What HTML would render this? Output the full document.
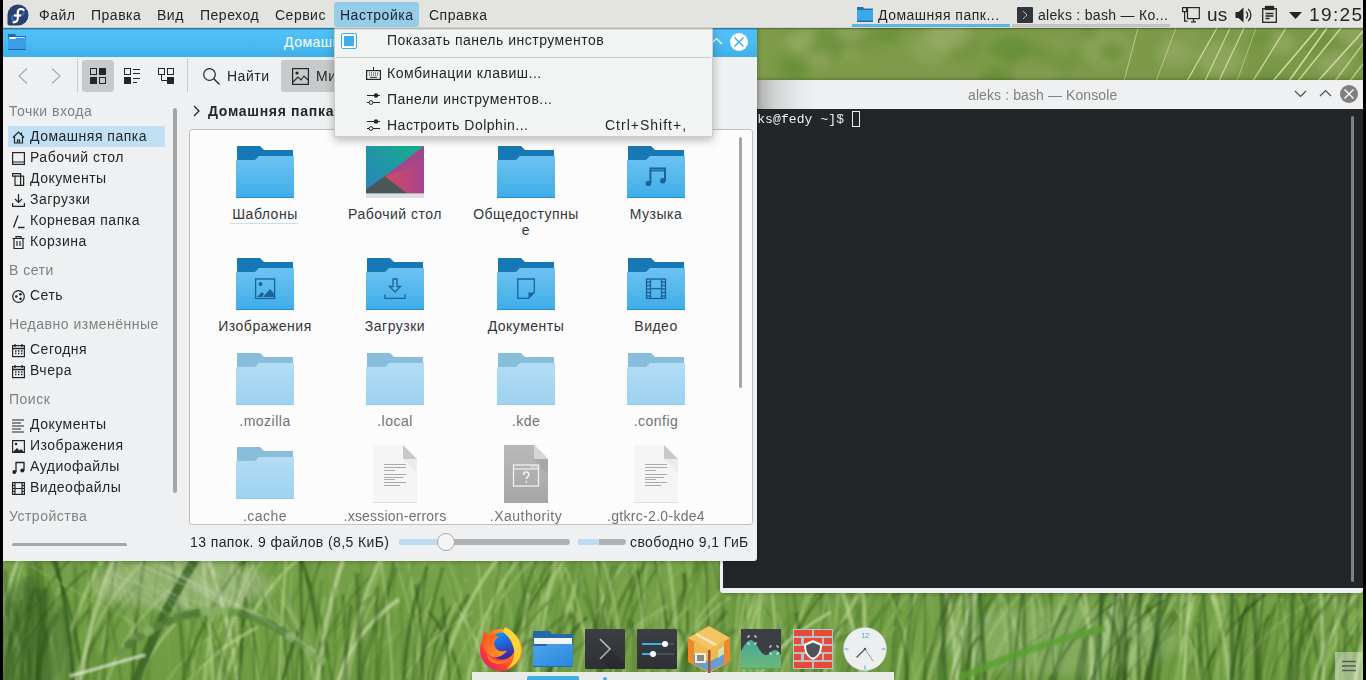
<!DOCTYPE html>
<html><head><meta charset="utf-8"><style>
*{box-sizing:border-box;margin:0;padding:0}
html,body{width:1366px;height:680px;overflow:hidden;background:#000}
body{position:relative;font-family:"Liberation Sans",sans-serif;font-size:14px;color:#232627;letter-spacing:0.5px}
.a{position:absolute}
.t{position:absolute;white-space:nowrap;line-height:16px}
svg.a{overflow:visible}
#wall{left:3px;top:0;width:1360px;height:680px;overflow:hidden;
 background:linear-gradient(180deg,#7d9c4c 0%,#75983f 15%,#6e9a45 60%,#79a552 85%,#6a9a3f 100%)}
#panel{left:3px;top:0;width:1360px;height:28px;background:#e3e4e0;border-bottom:1px solid #d0d2cc;box-shadow:0 1px 1.5px rgba(0,0,0,0.35);z-index:5}
.mi{top:7px}
.gh{color:#7f8081}
.lbl{position:absolute;white-space:nowrap;line-height:16px;text-align:center;width:130px;color:#31363b}
.hid{color:#6f7273}
</style></head><body>
<svg class="a" style="left:3px;top:0;overflow:hidden" width="1360" height="680" viewBox="3 0 1360 680"><defs><linearGradient id="wtop" x1="0" y1="0" x2="1" y2="0"><stop offset="0" stop-color="#74963f"/><stop offset="0.5" stop-color="#7e9c4a"/><stop offset="1" stop-color="#7a9848"/></linearGradient><linearGradient id="wbot" x1="0" y1="0" x2="0" y2="1"><stop offset="0" stop-color="#8aae60"/><stop offset="0.5" stop-color="#7ca64e"/><stop offset="1" stop-color="#709c44"/></linearGradient><filter id="blur4"><feGaussianBlur stdDeviation="4"/></filter><filter id="blur1"><feGaussianBlur stdDeviation="0.7"/></filter><filter id="blur2"><feGaussianBlur stdDeviation="1.2"/></filter></defs><rect x="3" y="0" width="1360" height="200" fill="url(#wtop)"/><rect x="3" y="200" width="1360" height="480" fill="url(#wbot)"/><g filter="url(#blur4)"><ellipse cx="953" cy="36" rx="19" ry="14" fill="#94a865" opacity="0.55"/><ellipse cx="1255" cy="33" rx="18" ry="13" fill="#88a058" opacity="0.55"/><ellipse cx="887" cy="33" rx="15" ry="11" fill="#5f8a30" opacity="0.55"/><ellipse cx="812" cy="51" rx="22" ry="16" fill="#94a865" opacity="0.55"/><ellipse cx="1331" cy="62" rx="18" ry="13" fill="#94a865" opacity="0.55"/><ellipse cx="1107" cy="49" rx="25" ry="18" fill="#94a865" opacity="0.55"/><ellipse cx="1094" cy="35" rx="15" ry="11" fill="#88a058" opacity="0.55"/><ellipse cx="828" cy="45" rx="22" ry="16" fill="#5f8a30" opacity="0.55"/><ellipse cx="819" cy="59" rx="12" ry="8" fill="#94a865" opacity="0.55"/><ellipse cx="1089" cy="31" rx="9" ry="7" fill="#5f8a30" opacity="0.55"/><ellipse cx="1058" cy="57" rx="21" ry="15" fill="#6a9038" opacity="0.55"/><ellipse cx="1112" cy="52" rx="13" ry="10" fill="#5f8a30" opacity="0.55"/><ellipse cx="1181" cy="41" rx="18" ry="13" fill="#88a058" opacity="0.55"/><ellipse cx="1057" cy="47" rx="16" ry="11" fill="#88a058" opacity="0.55"/><ellipse cx="1351" cy="34" rx="15" ry="11" fill="#9aae6a" opacity="0.55"/><ellipse cx="849" cy="54" rx="9" ry="6" fill="#94a865" opacity="0.55"/><ellipse cx="1220" cy="59" rx="23" ry="17" fill="#9aae6a" opacity="0.55"/><ellipse cx="963" cy="47" rx="17" ry="12" fill="#6a9038" opacity="0.55"/><ellipse cx="799" cy="33" rx="13" ry="9" fill="#94a865" opacity="0.55"/><ellipse cx="794" cy="66" rx="19" ry="14" fill="#6a9038" opacity="0.55"/><ellipse cx="929" cy="49" rx="20" ry="14" fill="#94a865" opacity="0.55"/><ellipse cx="1327" cy="47" rx="19" ry="13" fill="#6a9038" opacity="0.55"/><ellipse cx="793" cy="69" rx="11" ry="8" fill="#5f8a30" opacity="0.55"/><ellipse cx="998" cy="78" rx="17" ry="12" fill="#5f8a30" opacity="0.55"/><ellipse cx="1029" cy="58" rx="23" ry="17" fill="#6a9038" opacity="0.55"/><ellipse cx="1281" cy="43" rx="15" ry="11" fill="#9aae6a" opacity="0.55"/><ellipse cx="1171" cy="49" rx="12" ry="9" fill="#94a865" opacity="0.55"/><ellipse cx="864" cy="41" rx="12" ry="9" fill="#6a9038" opacity="0.55"/><ellipse cx="1261" cy="38" rx="13" ry="9" fill="#5f8a30" opacity="0.55"/><ellipse cx="1011" cy="48" rx="18" ry="13" fill="#5f8a30" opacity="0.55"/><ellipse cx="1175" cy="56" rx="19" ry="13" fill="#94a865" opacity="0.55"/><ellipse cx="1034" cy="75" rx="24" ry="17" fill="#88a058" opacity="0.55"/><ellipse cx="995" cy="50" rx="10" ry="7" fill="#6a9038" opacity="0.55"/><ellipse cx="795" cy="32" rx="12" ry="9" fill="#5f8a30" opacity="0.55"/><ellipse cx="824" cy="60" rx="10" ry="7" fill="#88a058" opacity="0.55"/><ellipse cx="849" cy="33" rx="15" ry="10" fill="#94a865" opacity="0.55"/><ellipse cx="800" cy="39" rx="15" ry="11" fill="#9aae6a" opacity="0.55"/><ellipse cx="1336" cy="61" rx="16" ry="12" fill="#94a865" opacity="0.55"/><ellipse cx="1271" cy="82" rx="16" ry="12" fill="#6a9038" opacity="0.55"/><ellipse cx="946" cy="36" rx="21" ry="15" fill="#9aae6a" opacity="0.55"/></g><g stroke="#dde8b0" fill="none" filter="url(#blur1)"><path d="M1124 81 L1138 28" stroke-width="1" opacity="0.6"/><path d="M1156 81 L1176 28" stroke-width="1" opacity="0.55"/><path d="M1187 81 L1217 28" stroke-width="1.3" opacity="0.8"/><path d="M1205 81 L1230 28" stroke-width="1.2" opacity="0.75"/><path d="M1219 81 L1244 28" stroke-width="1.2" opacity="0.8"/><path d="M1237 81 L1256 28" stroke-width="1" opacity="0.5"/><path d="M1253 81 L1286 28" stroke-width="1.3" opacity="0.8"/><path d="M1273 81 L1318 28" stroke-width="1.6" opacity="0.85"/><path d="M1289 81 L1327 28" stroke-width="1.6" opacity="0.85"/><path d="M1298 81 L1341 28" stroke-width="1.5" opacity="0.8"/><path d="M1318 81 L1366 28" stroke-width="1.6" opacity="0.8"/><path d="M1335 81 L1375 28" stroke-width="1.4" opacity="0.7"/><path d="M1350 81 L1390 28" stroke-width="1.4" opacity="0.7"/></g><g filter="url(#blur2)"><path d="M650 711 Q647 626 637 569" stroke="#2c5016" stroke-width="2.0" fill="none" opacity="0.61"/><path d="M1260 713 Q1269 643 1303 597" stroke="#4a7826" stroke-width="3.0" fill="none" opacity="0.42"/><path d="M493 695 Q499 591 523 522" stroke="#2c5016" stroke-width="1.9" fill="none" opacity="0.40"/><path d="M1116 720 Q1129 610 1181 537" stroke="#cde0a8" stroke-width="3.2" fill="none" opacity="0.40"/><path d="M705 701 Q697 651 668 617" stroke="#8cb85a" stroke-width="2.3" fill="none" opacity="0.39"/><path d="M827 700 Q838 594 881 523" stroke="#6a9a3c" stroke-width="3.9" fill="none" opacity="0.46"/><path d="M289 697 Q286 635 275 593" stroke="#35601c" stroke-width="2.3" fill="none" opacity="0.59"/><path d="M1100 693 Q1115 597 1178 533" stroke="#b8d48c" stroke-width="2.3" fill="none" opacity="0.38"/><path d="M1085 700 Q1102 594 1171 524" stroke="#cde0a8" stroke-width="2.3" fill="none" opacity="0.63"/><path d="M99 695 Q92 575 62 496" stroke="#5a8a32" stroke-width="3.4" fill="none" opacity="0.37"/><path d="M1137 719 Q1138 624 1143 561" stroke="#2c5016" stroke-width="2.6" fill="none" opacity="0.31"/><path d="M1099 712 Q1111 656 1157 619" stroke="#a8c878" stroke-width="2.2" fill="none" opacity="0.69"/><path d="M1137 696 Q1136 630 1135 586" stroke="#b8d48c" stroke-width="3.2" fill="none" opacity="0.45"/><path d="M742 715 Q753 663 798 628" stroke="#5a8a32" stroke-width="2.9" fill="none" opacity="0.67"/><path d="M703 715 Q699 604 680 529" stroke="#a8c878" stroke-width="2.5" fill="none" opacity="0.31"/><path d="M596 695 Q609 647 660 615" stroke="#a8c878" stroke-width="1.3" fill="none" opacity="0.58"/><path d="M148 692 Q154 595 177 530" stroke="#5a8a32" stroke-width="3.3" fill="none" opacity="0.35"/><path d="M764 697 Q776 630 825 584" stroke="#2c5016" stroke-width="2.2" fill="none" opacity="0.31"/><path d="M1232 692 Q1249 620 1318 573" stroke="#2c5016" stroke-width="1.4" fill="none" opacity="0.42"/><path d="M691 714 Q690 630 684 573" stroke="#2c5016" stroke-width="3.6" fill="none" opacity="0.72"/><path d="M343 707 Q357 591 413 514" stroke="#a8c878" stroke-width="2.1" fill="none" opacity="0.48"/><path d="M422 710 Q420 631 410 579" stroke="#8cb85a" stroke-width="3.3" fill="none" opacity="0.70"/><path d="M196 711 Q192 616 175 552" stroke="#a8c878" stroke-width="3.9" fill="none" opacity="0.40"/><path d="M1314 702 Q1331 619 1402 563" stroke="#b8d48c" stroke-width="1.3" fill="none" opacity="0.49"/><path d="M702 700 Q702 638 703 597" stroke="#6a9a3c" stroke-width="0.9" fill="none" opacity="0.55"/><path d="M597 691 Q605 619 638 571" stroke="#2c5016" stroke-width="3.9" fill="none" opacity="0.35"/><path d="M1266 697 Q1260 586 1237 512" stroke="#8cb85a" stroke-width="0.9" fill="none" opacity="0.65"/><path d="M359 694 Q374 615 437 563" stroke="#8cb85a" stroke-width="2.1" fill="none" opacity="0.54"/><path d="M701 705 Q700 633 697 586" stroke="#a8c878" stroke-width="2.2" fill="none" opacity="0.33"/><path d="M1294 709 Q1288 603 1265 533" stroke="#b8d48c" stroke-width="1.0" fill="none" opacity="0.69"/><path d="M615 700 Q631 612 696 554" stroke="#8cb85a" stroke-width="2.8" fill="none" opacity="0.32"/><path d="M973 718 Q972 600 967 522" stroke="#a8c878" stroke-width="1.4" fill="none" opacity="0.44"/><path d="M407 713 Q412 644 432 598" stroke="#a8c878" stroke-width="1.7" fill="none" opacity="0.66"/><path d="M1372 691 Q1377 642 1398 609" stroke="#b8d48c" stroke-width="2.4" fill="none" opacity="0.41"/><path d="M606 710 Q615 615 651 552" stroke="#2c5016" stroke-width="3.5" fill="none" opacity="0.48"/><path d="M689 711 Q690 592 694 513" stroke="#a8c878" stroke-width="2.1" fill="none" opacity="0.46"/><path d="M56 694 Q67 641 112 605" stroke="#8cb85a" stroke-width="2.2" fill="none" opacity="0.32"/><path d="M911 701 Q929 617 998 561" stroke="#b8d48c" stroke-width="3.0" fill="none" opacity="0.32"/><path d="M239 698 Q241 650 247 618" stroke="#6a9a3c" stroke-width="3.9" fill="none" opacity="0.55"/><path d="M322 719 Q323 649 329 602" stroke="#35601c" stroke-width="1.9" fill="none" opacity="0.34"/><path d="M371 710 Q383 644 431 600" stroke="#4a7826" stroke-width="1.6" fill="none" opacity="0.34"/><path d="M539 691 Q539 642 539 609" stroke="#b8d48c" stroke-width="1.1" fill="none" opacity="0.73"/><path d="M1175 695 Q1187 582 1236 508" stroke="#cde0a8" stroke-width="3.2" fill="none" opacity="0.62"/><path d="M672 699 Q668 606 651 544" stroke="#2c5016" stroke-width="2.8" fill="none" opacity="0.63"/><path d="M1117 694 Q1122 608 1143 551" stroke="#35601c" stroke-width="3.4" fill="none" opacity="0.56"/><path d="M1230 710 Q1228 613 1220 547" stroke="#35601c" stroke-width="0.9" fill="none" opacity="0.59"/><path d="M1323 701 Q1317 621 1290 567" stroke="#35601c" stroke-width="2.8" fill="none" opacity="0.61"/><path d="M665 690 Q676 585 722 514" stroke="#2c5016" stroke-width="3.7" fill="none" opacity="0.34"/><path d="M716 712 Q729 630 782 576" stroke="#8cb85a" stroke-width="1.6" fill="none" opacity="0.64"/><path d="M303 709 Q317 628 373 574" stroke="#4a7826" stroke-width="2.3" fill="none" opacity="0.61"/><path d="M1054 709 Q1048 614 1024 551" stroke="#a8c878" stroke-width="1.9" fill="none" opacity="0.59"/><path d="M950 709 Q955 651 973 613" stroke="#5a8a32" stroke-width="1.7" fill="none" opacity="0.60"/><path d="M949 710 Q954 641 976 595" stroke="#5a8a32" stroke-width="2.3" fill="none" opacity="0.65"/><path d="M1371 706 Q1365 636 1342 589" stroke="#5a8a32" stroke-width="0.9" fill="none" opacity="0.51"/><path d="M1128 719 Q1127 639 1123 585" stroke="#b8d48c" stroke-width="3.7" fill="none" opacity="0.72"/><path d="M84 693 Q83 591 78 523" stroke="#6a9a3c" stroke-width="1.2" fill="none" opacity="0.67"/><path d="M692 717 Q690 618 682 552" stroke="#5a8a32" stroke-width="2.1" fill="none" opacity="0.37"/><path d="M1310 710 Q1321 633 1364 582" stroke="#cde0a8" stroke-width="1.9" fill="none" opacity="0.44"/><path d="M1156 690 Q1170 588 1225 520" stroke="#4a7826" stroke-width="3.8" fill="none" opacity="0.39"/><path d="M-4 712 Q-10 646 -35 602" stroke="#cde0a8" stroke-width="4.0" fill="none" opacity="0.57"/><path d="M485 703 Q478 635 451 590" stroke="#4a7826" stroke-width="1.0" fill="none" opacity="0.60"/><path d="M869 694 Q872 577 886 498" stroke="#6a9a3c" stroke-width="1.4" fill="none" opacity="0.47"/><path d="M1319 717 Q1327 610 1361 539" stroke="#2c5016" stroke-width="2.6" fill="none" opacity="0.62"/><path d="M49 712 Q61 632 107 578" stroke="#8cb85a" stroke-width="2.4" fill="none" opacity="0.71"/><path d="M750 695 Q749 617 747 565" stroke="#8cb85a" stroke-width="3.2" fill="none" opacity="0.74"/><path d="M344 710 Q351 640 377 594" stroke="#cde0a8" stroke-width="1.2" fill="none" opacity="0.59"/><path d="M85 705 Q92 599 117 528" stroke="#5a8a32" stroke-width="3.7" fill="none" opacity="0.75"/><path d="M610 694 Q604 632 582 591" stroke="#6a9a3c" stroke-width="2.6" fill="none" opacity="0.44"/><path d="M496 714 Q488 652 458 610" stroke="#cde0a8" stroke-width="2.0" fill="none" opacity="0.64"/><path d="M274 698 Q279 596 299 528" stroke="#6a9a3c" stroke-width="1.2" fill="none" opacity="0.53"/><path d="M861 716 Q861 652 857 610" stroke="#b8d48c" stroke-width="2.0" fill="none" opacity="0.59"/><path d="M585 699 Q602 593 670 522" stroke="#a8c878" stroke-width="0.9" fill="none" opacity="0.62"/><path d="M1234 704 Q1226 614 1194 554" stroke="#cde0a8" stroke-width="3.8" fill="none" opacity="0.72"/><path d="M719 704 Q731 624 781 570" stroke="#b8d48c" stroke-width="1.3" fill="none" opacity="0.54"/><path d="M935 718 Q944 618 979 552" stroke="#5a8a32" stroke-width="1.1" fill="none" opacity="0.65"/><path d="M-18 694 Q-25 605 -53 545" stroke="#8cb85a" stroke-width="3.9" fill="none" opacity="0.58"/><path d="M720 703 Q714 600 692 531" stroke="#8cb85a" stroke-width="2.5" fill="none" opacity="0.56"/><path d="M523 697 Q516 605 485 545" stroke="#8cb85a" stroke-width="4.0" fill="none" opacity="0.43"/><path d="M423 715 Q429 650 451 606" stroke="#2c5016" stroke-width="1.6" fill="none" opacity="0.73"/><path d="M967 699 Q971 650 991 617" stroke="#cde0a8" stroke-width="1.1" fill="none" opacity="0.40"/><path d="M574 701 Q584 618 625 562" stroke="#cde0a8" stroke-width="2.0" fill="none" opacity="0.48"/><path d="M-11 699 Q-17 590 -42 517" stroke="#5a8a32" stroke-width="3.9" fill="none" opacity="0.44"/><path d="M1128 697 Q1140 633 1187 590" stroke="#8cb85a" stroke-width="1.1" fill="none" opacity="0.58"/><path d="M834 717 Q850 634 912 579" stroke="#35601c" stroke-width="3.8" fill="none" opacity="0.37"/><path d="M531 696 Q527 578 509 499" stroke="#35601c" stroke-width="3.1" fill="none" opacity="0.38"/><path d="M609 711 Q604 641 584 594" stroke="#4a7826" stroke-width="3.8" fill="none" opacity="0.45"/><path d="M240 718 Q233 616 204 549" stroke="#cde0a8" stroke-width="3.5" fill="none" opacity="0.74"/><path d="M599 693 Q594 640 570 604" stroke="#cde0a8" stroke-width="3.9" fill="none" opacity="0.36"/><path d="M1330 696 Q1343 623 1397 573" stroke="#cde0a8" stroke-width="1.1" fill="none" opacity="0.62"/><path d="M254 706 Q254 626 256 573" stroke="#5a8a32" stroke-width="0.9" fill="none" opacity="0.48"/><path d="M1117 713 Q1109 662 1081 628" stroke="#4a7826" stroke-width="3.4" fill="none" opacity="0.33"/><path d="M253 692 Q254 600 260 539" stroke="#6a9a3c" stroke-width="3.9" fill="none" opacity="0.58"/><path d="M347 711 Q346 641 343 594" stroke="#35601c" stroke-width="3.1" fill="none" opacity="0.57"/><path d="M1108 718 Q1121 666 1175 631" stroke="#4a7826" stroke-width="2.3" fill="none" opacity="0.73"/><path d="M1315 702 Q1319 636 1331 591" stroke="#5a8a32" stroke-width="1.2" fill="none" opacity="0.52"/><path d="M-8 718 Q2 648 42 602" stroke="#a8c878" stroke-width="2.7" fill="none" opacity="0.45"/><path d="M427 701 Q421 597 398 527" stroke="#b8d48c" stroke-width="2.1" fill="none" opacity="0.37"/><path d="M551 709 Q557 627 582 572" stroke="#a8c878" stroke-width="3.9" fill="none" opacity="0.70"/><path d="M1363 698 Q1357 644 1335 608" stroke="#5a8a32" stroke-width="4.0" fill="none" opacity="0.74"/><path d="M222 694 Q238 613 298 559" stroke="#b8d48c" stroke-width="3.2" fill="none" opacity="0.68"/><path d="M910 694 Q910 585 908 513" stroke="#8cb85a" stroke-width="2.0" fill="none" opacity="0.63"/><path d="M259 697 Q255 632 239 588" stroke="#b8d48c" stroke-width="1.8" fill="none" opacity="0.48"/><path d="M1369 705 Q1382 641 1435 597" stroke="#5a8a32" stroke-width="4.0" fill="none" opacity="0.35"/><path d="M645 715 Q660 606 724 534" stroke="#35601c" stroke-width="3.6" fill="none" opacity="0.40"/><path d="M51 708 Q48 600 36 529" stroke="#4a7826" stroke-width="2.0" fill="none" opacity="0.69"/><path d="M609 698 Q625 594 692 524" stroke="#4a7826" stroke-width="2.8" fill="none" opacity="0.62"/><path d="M470 691 Q463 619 435 570" stroke="#8cb85a" stroke-width="0.9" fill="none" opacity="0.63"/><path d="M1260 714 Q1262 607 1273 536" stroke="#6a9a3c" stroke-width="1.4" fill="none" opacity="0.44"/><path d="M265 714 Q258 626 233 568" stroke="#4a7826" stroke-width="3.3" fill="none" opacity="0.60"/><path d="M196 706 Q199 611 208 548" stroke="#8cb85a" stroke-width="2.1" fill="none" opacity="0.43"/><path d="M411 719 Q417 648 444 601" stroke="#6a9a3c" stroke-width="2.1" fill="none" opacity="0.31"/><path d="M1053 714 Q1055 620 1064 557" stroke="#cde0a8" stroke-width="1.5" fill="none" opacity="0.30"/><path d="M1242 703 Q1245 596 1255 524" stroke="#6a9a3c" stroke-width="2.3" fill="none" opacity="0.37"/><path d="M1 707 Q16 612 79 550" stroke="#4a7826" stroke-width="2.6" fill="none" opacity="0.72"/><path d="M1012 695 Q1008 622 993 573" stroke="#a8c878" stroke-width="3.8" fill="none" opacity="0.35"/><path d="M667 714 Q664 597 652 518" stroke="#a8c878" stroke-width="3.5" fill="none" opacity="0.32"/><path d="M1258 699 Q1266 608 1301 547" stroke="#4a7826" stroke-width="3.7" fill="none" opacity="0.58"/><path d="M1134 695 Q1132 590 1123 521" stroke="#cde0a8" stroke-width="2.8" fill="none" opacity="0.39"/><path d="M642 707 Q659 656 724 622" stroke="#a8c878" stroke-width="2.0" fill="none" opacity="0.36"/><path d="M326 712 Q319 599 291 524" stroke="#2c5016" stroke-width="3.5" fill="none" opacity="0.60"/><path d="M915 700 Q919 624 934 573" stroke="#8cb85a" stroke-width="2.9" fill="none" opacity="0.44"/><path d="M329 702 Q334 627 354 578" stroke="#a8c878" stroke-width="0.9" fill="none" opacity="0.58"/><path d="M665 697 Q678 594 727 525" stroke="#5a8a32" stroke-width="3.5" fill="none" opacity="0.66"/><path d="M540 692 Q542 618 548 569" stroke="#5a8a32" stroke-width="2.4" fill="none" opacity="0.60"/><path d="M37 694 Q37 580 38 503" stroke="#2c5016" stroke-width="1.1" fill="none" opacity="0.64"/><path d="M1233 710 Q1225 605 1196 535" stroke="#4a7826" stroke-width="4.0" fill="none" opacity="0.63"/><path d="M1121 696 Q1126 577 1145 498" stroke="#a8c878" stroke-width="3.0" fill="none" opacity="0.62"/><path d="M290 715 Q288 623 282 562" stroke="#6a9a3c" stroke-width="3.7" fill="none" opacity="0.42"/><path d="M1122 694 Q1138 610 1201 554" stroke="#b8d48c" stroke-width="2.7" fill="none" opacity="0.58"/><path d="M312 701 Q315 639 325 597" stroke="#8cb85a" stroke-width="3.0" fill="none" opacity="0.70"/><path d="M216 714 Q222 657 245 620" stroke="#6a9a3c" stroke-width="3.9" fill="none" opacity="0.50"/><path d="M710 711 Q709 598 703 523" stroke="#2c5016" stroke-width="2.8" fill="none" opacity="0.48"/><path d="M1097 698 Q1104 579 1132 499" stroke="#6a9a3c" stroke-width="1.9" fill="none" opacity="0.34"/><path d="M302 708 Q302 591 301 514" stroke="#2c5016" stroke-width="1.6" fill="none" opacity="0.59"/><path d="M1358 708 Q1358 612 1358 548" stroke="#35601c" stroke-width="3.2" fill="none" opacity="0.40"/><path d="M387 709 Q389 631 395 579" stroke="#35601c" stroke-width="1.2" fill="none" opacity="0.40"/><path d="M894 691 Q896 642 900 610" stroke="#4a7826" stroke-width="2.5" fill="none" opacity="0.54"/><path d="M559 699 Q560 641 566 603" stroke="#5a8a32" stroke-width="1.3" fill="none" opacity="0.31"/><path d="M1102 711 Q1096 631 1070 577" stroke="#a8c878" stroke-width="3.6" fill="none" opacity="0.65"/><path d="M543 698 Q552 649 587 617" stroke="#2c5016" stroke-width="3.7" fill="none" opacity="0.57"/><path d="M790 708 Q795 623 814 566" stroke="#a8c878" stroke-width="3.7" fill="none" opacity="0.32"/><path d="M724 702 Q718 637 692 594" stroke="#4a7826" stroke-width="0.8" fill="none" opacity="0.55"/><path d="M1297 694 Q1305 632 1336 590" stroke="#2c5016" stroke-width="2.9" fill="none" opacity="0.49"/><path d="M838 705 Q847 653 880 618" stroke="#5a8a32" stroke-width="3.1" fill="none" opacity="0.30"/><path d="M1162 712 Q1173 631 1219 577" stroke="#5a8a32" stroke-width="1.4" fill="none" opacity="0.75"/><path d="M346 709 Q361 652 422 615" stroke="#8cb85a" stroke-width="3.1" fill="none" opacity="0.42"/><path d="M755 703 Q761 598 783 528" stroke="#8cb85a" stroke-width="1.7" fill="none" opacity="0.72"/><path d="M1232 693 Q1228 608 1214 552" stroke="#b8d48c" stroke-width="3.5" fill="none" opacity="0.39"/><path d="M203 717 Q205 656 213 614" stroke="#b8d48c" stroke-width="2.0" fill="none" opacity="0.68"/><path d="M1270 719 Q1276 611 1300 538" stroke="#5a8a32" stroke-width="3.5" fill="none" opacity="0.61"/><path d="M1181 703 Q1187 603 1215 536" stroke="#8cb85a" stroke-width="3.3" fill="none" opacity="0.48"/><path d="M799 707 Q792 647 764 606" stroke="#4a7826" stroke-width="1.1" fill="none" opacity="0.72"/><path d="M463 694 Q456 644 428 611" stroke="#35601c" stroke-width="3.0" fill="none" opacity="0.63"/><path d="M72 708 Q85 634 138 584" stroke="#2c5016" stroke-width="3.7" fill="none" opacity="0.33"/><path d="M1195 717 Q1190 601 1169 524" stroke="#b8d48c" stroke-width="1.5" fill="none" opacity="0.32"/><path d="M1309 717 Q1303 615 1280 547" stroke="#8cb85a" stroke-width="2.3" fill="none" opacity="0.36"/><path d="M1089 709 Q1090 640 1093 594" stroke="#8cb85a" stroke-width="0.9" fill="none" opacity="0.42"/><path d="M376 711 Q376 637 377 587" stroke="#2c5016" stroke-width="2.3" fill="none" opacity="0.43"/><path d="M1024 714 Q1029 663 1051 630" stroke="#4a7826" stroke-width="1.9" fill="none" opacity="0.62"/><path d="M733 696 Q727 586 705 513" stroke="#8cb85a" stroke-width="1.3" fill="none" opacity="0.30"/><path d="M263 713 Q255 594 223 516" stroke="#5a8a32" stroke-width="1.1" fill="none" opacity="0.61"/><path d="M1135 719 Q1152 628 1220 568" stroke="#2c5016" stroke-width="1.6" fill="none" opacity="0.72"/><path d="M377 696 Q382 598 402 533" stroke="#4a7826" stroke-width="3.8" fill="none" opacity="0.65"/><path d="M666 720 Q661 631 640 572" stroke="#6a9a3c" stroke-width="1.9" fill="none" opacity="0.48"/><path d="M532 717 Q548 663 608 626" stroke="#35601c" stroke-width="2.0" fill="none" opacity="0.44"/><path d="M579 706 Q597 646 667 606" stroke="#b8d48c" stroke-width="3.8" fill="none" opacity="0.36"/><path d="M812 711 Q805 619 776 558" stroke="#6a9a3c" stroke-width="2.5" fill="none" opacity="0.69"/><path d="M610 707 Q614 635 631 588" stroke="#8cb85a" stroke-width="2.7" fill="none" opacity="0.36"/><path d="M627 717 Q624 651 612 608" stroke="#8cb85a" stroke-width="3.2" fill="none" opacity="0.67"/><path d="M844 712 Q855 594 898 515" stroke="#2c5016" stroke-width="1.9" fill="none" opacity="0.41"/><path d="M1318 698 Q1336 581 1407 503" stroke="#a8c878" stroke-width="3.9" fill="none" opacity="0.35"/><path d="M518 720 Q529 614 573 544" stroke="#cde0a8" stroke-width="1.7" fill="none" opacity="0.35"/><path d="M1256 698 Q1260 587 1276 512" stroke="#35601c" stroke-width="2.1" fill="none" opacity="0.66"/><path d="M951 705 Q955 611 971 549" stroke="#a8c878" stroke-width="1.6" fill="none" opacity="0.63"/><path d="M-12 697 Q-2 588 39 515" stroke="#cde0a8" stroke-width="3.5" fill="none" opacity="0.60"/><path d="M893 716 Q901 622 929 559" stroke="#b8d48c" stroke-width="3.0" fill="none" opacity="0.59"/><path d="M615 699 Q610 606 588 544" stroke="#cde0a8" stroke-width="1.6" fill="none" opacity="0.48"/><path d="M978 695 Q982 586 1000 513" stroke="#35601c" stroke-width="2.8" fill="none" opacity="0.48"/><path d="M925 718 Q934 657 970 616" stroke="#35601c" stroke-width="2.0" fill="none" opacity="0.52"/><path d="M1344 691 Q1341 604 1325 546" stroke="#b8d48c" stroke-width="2.5" fill="none" opacity="0.35"/><path d="M784 706 Q790 607 811 540" stroke="#6a9a3c" stroke-width="2.5" fill="none" opacity="0.48"/><path d="M1307 696 Q1309 599 1318 534" stroke="#4a7826" stroke-width="3.1" fill="none" opacity="0.58"/><path d="M873 698 Q866 622 841 572" stroke="#4a7826" stroke-width="2.1" fill="none" opacity="0.49"/><path d="M958 701 Q955 633 947 589" stroke="#cde0a8" stroke-width="3.8" fill="none" opacity="0.54"/><path d="M286 714 Q284 638 274 587" stroke="#a8c878" stroke-width="3.8" fill="none" opacity="0.33"/><path d="M1098 696 Q1108 602 1151 539" stroke="#a8c878" stroke-width="1.9" fill="none" opacity="0.59"/><path d="M1126 714 Q1126 633 1124 578" stroke="#2c5016" stroke-width="2.9" fill="none" opacity="0.65"/><path d="M637 714 Q647 649 689 606" stroke="#8cb85a" stroke-width="3.9" fill="none" opacity="0.61"/><path d="M654 714 Q656 609 661 538" stroke="#8cb85a" stroke-width="1.8" fill="none" opacity="0.52"/><path d="M853 693 Q849 580 833 505" stroke="#8cb85a" stroke-width="3.5" fill="none" opacity="0.33"/><path d="M1139 717 Q1135 613 1117 543" stroke="#6a9a3c" stroke-width="2.8" fill="none" opacity="0.31"/><path d="M-4 719 Q-5 623 -11 560" stroke="#4a7826" stroke-width="2.7" fill="none" opacity="0.68"/><path d="M240 704 Q237 599 227 529" stroke="#cde0a8" stroke-width="3.3" fill="none" opacity="0.38"/><path d="M1228 708 Q1237 604 1274 534" stroke="#2c5016" stroke-width="3.3" fill="none" opacity="0.68"/><path d="M256 711 Q268 625 313 567" stroke="#5a8a32" stroke-width="2.9" fill="none" opacity="0.35"/><path d="M146 703 Q150 595 167 523" stroke="#2c5016" stroke-width="1.0" fill="none" opacity="0.51"/><path d="M182 705 Q188 621 212 565" stroke="#35601c" stroke-width="1.3" fill="none" opacity="0.44"/><path d="M954 705 Q958 636 975 589" stroke="#cde0a8" stroke-width="2.1" fill="none" opacity="0.73"/><path d="M86 709 Q78 615 49 553" stroke="#35601c" stroke-width="3.0" fill="none" opacity="0.72"/><path d="M443 719 Q447 635 466 578" stroke="#a8c878" stroke-width="0.9" fill="none" opacity="0.62"/><path d="M855 700 Q857 590 863 517" stroke="#5a8a32" stroke-width="3.3" fill="none" opacity="0.55"/><path d="M1257 699 Q1256 626 1250 577" stroke="#35601c" stroke-width="3.4" fill="none" opacity="0.43"/><path d="M1139 702 Q1138 618 1134 562" stroke="#2c5016" stroke-width="1.9" fill="none" opacity="0.39"/><path d="M669 694 Q680 632 722 590" stroke="#a8c878" stroke-width="2.7" fill="none" opacity="0.59"/><path d="M1078 691 Q1093 591 1153 524" stroke="#2c5016" stroke-width="2.6" fill="none" opacity="0.48"/><path d="M132 691 Q136 584 154 513" stroke="#35601c" stroke-width="3.3" fill="none" opacity="0.71"/><path d="M836 709 Q847 615 887 553" stroke="#4a7826" stroke-width="1.5" fill="none" opacity="0.60"/><path d="M621 713 Q618 658 605 621" stroke="#35601c" stroke-width="2.1" fill="none" opacity="0.35"/><path d="M1283 690 Q1278 580 1261 506" stroke="#8cb85a" stroke-width="2.6" fill="none" opacity="0.42"/><path d="M403 703 Q406 632 419 584" stroke="#35601c" stroke-width="2.4" fill="none" opacity="0.53"/><path d="M1135 713 Q1145 635 1185 583" stroke="#cde0a8" stroke-width="2.2" fill="none" opacity="0.31"/><path d="M522 708 Q540 592 610 515" stroke="#5a8a32" stroke-width="3.3" fill="none" opacity="0.55"/><path d="M96 704 Q104 592 138 517" stroke="#cde0a8" stroke-width="0.8" fill="none" opacity="0.61"/><path d="M150 719 Q165 665 223 628" stroke="#a8c878" stroke-width="2.3" fill="none" opacity="0.42"/><path d="M777 704 Q793 602 857 534" stroke="#6a9a3c" stroke-width="3.3" fill="none" opacity="0.62"/><path d="M1178 712 Q1186 658 1219 622" stroke="#5a8a32" stroke-width="2.3" fill="none" opacity="0.72"/><path d="M336 719 Q328 619 297 553" stroke="#35601c" stroke-width="3.6" fill="none" opacity="0.61"/><path d="M846 702 Q853 631 884 584" stroke="#5a8a32" stroke-width="2.7" fill="none" opacity="0.44"/><path d="M1308 712 Q1305 630 1290 575" stroke="#4a7826" stroke-width="2.0" fill="none" opacity="0.59"/><path d="M862 703 Q874 627 924 576" stroke="#8cb85a" stroke-width="3.3" fill="none" opacity="0.56"/><path d="M389 692 Q400 574 441 495" stroke="#6a9a3c" stroke-width="3.6" fill="none" opacity="0.63"/><path d="M2 695 Q9 587 38 515" stroke="#b8d48c" stroke-width="2.0" fill="none" opacity="0.61"/><path d="M822 717 Q822 611 819 540" stroke="#35601c" stroke-width="1.8" fill="none" opacity="0.42"/><path d="M200 718 Q213 615 262 546" stroke="#8cb85a" stroke-width="3.5" fill="none" opacity="0.67"/><path d="M1194 707 Q1208 639 1265 594" stroke="#2c5016" stroke-width="3.0" fill="none" opacity="0.71"/><path d="M466 693 Q478 605 529 546" stroke="#b8d48c" stroke-width="3.3" fill="none" opacity="0.62"/><path d="M1355 699 Q1357 647 1367 612" stroke="#b8d48c" stroke-width="3.8" fill="none" opacity="0.56"/><path d="M-7 702 Q-1 615 23 557" stroke="#6a9a3c" stroke-width="3.3" fill="none" opacity="0.40"/><path d="M791 717 Q797 605 819 531" stroke="#5a8a32" stroke-width="2.4" fill="none" opacity="0.39"/><path d="M278 693 Q277 587 275 516" stroke="#6a9a3c" stroke-width="2.1" fill="none" opacity="0.53"/><path d="M189 691 Q190 572 197 492" stroke="#4a7826" stroke-width="2.0" fill="none" opacity="0.51"/><path d="M94 699 Q94 649 91 616" stroke="#35601c" stroke-width="1.1" fill="none" opacity="0.39"/><path d="M1199 707 Q1197 617 1187 557" stroke="#8cb85a" stroke-width="2.2" fill="none" opacity="0.73"/><path d="M1054 715 Q1053 597 1047 519" stroke="#35601c" stroke-width="1.9" fill="none" opacity="0.75"/><path d="M509 691 Q511 640 518 607" stroke="#5a8a32" stroke-width="2.4" fill="none" opacity="0.68"/><path d="M1233 716 Q1249 622 1313 559" stroke="#4a7826" stroke-width="1.6" fill="none" opacity="0.55"/><path d="M877 719 Q879 622 888 558" stroke="#5a8a32" stroke-width="3.5" fill="none" opacity="0.47"/><path d="M309 712 Q326 651 392 611" stroke="#6a9a3c" stroke-width="1.0" fill="none" opacity="0.55"/><path d="M19 718 Q24 651 46 607" stroke="#5a8a32" stroke-width="1.0" fill="none" opacity="0.37"/><path d="M1037 718 Q1037 621 1036 557" stroke="#5a8a32" stroke-width="3.2" fill="none" opacity="0.35"/><path d="M433 698 Q438 641 456 603" stroke="#a8c878" stroke-width="2.2" fill="none" opacity="0.66"/><path d="M1260 717 Q1276 635 1339 581" stroke="#35601c" stroke-width="1.3" fill="none" opacity="0.67"/><path d="M89 709 Q100 634 146 584" stroke="#5a8a32" stroke-width="3.9" fill="none" opacity="0.72"/><path d="M519 691 Q536 637 606 602" stroke="#6a9a3c" stroke-width="3.4" fill="none" opacity="0.51"/><path d="M859 694 Q853 630 827 588" stroke="#5a8a32" stroke-width="2.6" fill="none" opacity="0.37"/><path d="M1199 698 Q1195 620 1179 569" stroke="#8cb85a" stroke-width="2.6" fill="none" opacity="0.43"/><path d="M1106 698 Q1110 642 1125 605" stroke="#5a8a32" stroke-width="1.2" fill="none" opacity="0.74"/><path d="M60 717 Q57 621 47 557" stroke="#5a8a32" stroke-width="3.5" fill="none" opacity="0.35"/><path d="M1037 719 Q1036 640 1031 587" stroke="#b8d48c" stroke-width="3.8" fill="none" opacity="0.34"/><path d="M385 717 Q396 665 440 630" stroke="#8cb85a" stroke-width="1.3" fill="none" opacity="0.59"/><path d="M599 705 Q602 620 617 564" stroke="#2c5016" stroke-width="1.7" fill="none" opacity="0.46"/><path d="M37 702 Q33 634 20 589" stroke="#a8c878" stroke-width="2.5" fill="none" opacity="0.40"/><path d="M226 708 Q241 600 301 529" stroke="#5a8a32" stroke-width="3.2" fill="none" opacity="0.38"/><path d="M172 710 Q169 617 157 555" stroke="#8cb85a" stroke-width="1.4" fill="none" opacity="0.33"/><path d="M1006 702 Q999 602 973 536" stroke="#6a9a3c" stroke-width="1.9" fill="none" opacity="0.68"/><path d="M1190 705 Q1206 656 1269 623" stroke="#5a8a32" stroke-width="1.2" fill="none" opacity="0.60"/><path d="M328 707 Q321 588 292 509" stroke="#6a9a3c" stroke-width="2.6" fill="none" opacity="0.69"/><path d="M479 718 Q472 600 448 522" stroke="#6a9a3c" stroke-width="3.1" fill="none" opacity="0.67"/><path d="M1192 700 Q1194 600 1201 534" stroke="#35601c" stroke-width="1.7" fill="none" opacity="0.35"/><path d="M1003 703 Q1016 654 1068 620" stroke="#a8c878" stroke-width="0.9" fill="none" opacity="0.74"/><path d="M293 695 Q292 640 286 603" stroke="#35601c" stroke-width="0.9" fill="none" opacity="0.72"/><path d="M1014 698 Q1023 590 1057 517" stroke="#5a8a32" stroke-width="2.5" fill="none" opacity="0.62"/><path d="M124 716 Q117 616 90 550" stroke="#4a7826" stroke-width="2.3" fill="none" opacity="0.56"/><path d="M1046 693 Q1061 637 1121 599" stroke="#2c5016" stroke-width="2.7" fill="none" opacity="0.69"/><path d="M186 707 Q182 605 167 538" stroke="#35601c" stroke-width="3.8" fill="none" opacity="0.47"/><path d="M569 715 Q571 629 580 572" stroke="#35601c" stroke-width="3.3" fill="none" opacity="0.45"/><path d="M317 700 Q334 621 404 568" stroke="#6a9a3c" stroke-width="3.4" fill="none" opacity="0.68"/><path d="M55 706 Q71 589 136 511" stroke="#b8d48c" stroke-width="3.6" fill="none" opacity="0.60"/><path d="M-4 693 Q-3 632 -2 591" stroke="#b8d48c" stroke-width="2.4" fill="none" opacity="0.31"/><path d="M175 719 Q192 615 257 546" stroke="#35601c" stroke-width="3.4" fill="none" opacity="0.70"/><path d="M1218 691 Q1217 597 1213 534" stroke="#8cb85a" stroke-width="2.8" fill="none" opacity="0.66"/><path d="M30 693 Q22 636 -8 598" stroke="#b8d48c" stroke-width="3.8" fill="none" opacity="0.43"/><path d="M408 709 Q415 653 445 615" stroke="#2c5016" stroke-width="3.7" fill="none" opacity="0.34"/><path d="M806 718 Q812 638 833 585" stroke="#8cb85a" stroke-width="3.7" fill="none" opacity="0.56"/><path d="M364 712 Q363 611 361 543" stroke="#5a8a32" stroke-width="2.8" fill="none" opacity="0.56"/><path d="M891 696 Q894 597 910 531" stroke="#2c5016" stroke-width="1.8" fill="none" opacity="0.52"/><path d="M1126 691 Q1123 619 1111 571" stroke="#2c5016" stroke-width="2.0" fill="none" opacity="0.56"/><path d="M-3 701 Q-5 591 -12 517" stroke="#2c5016" stroke-width="1.8" fill="none" opacity="0.42"/><path d="M1210 696 Q1202 644 1173 610" stroke="#2c5016" stroke-width="1.0" fill="none" opacity="0.69"/><path d="M596 692 Q599 616 613 565" stroke="#4a7826" stroke-width="2.5" fill="none" opacity="0.75"/><path d="M929 718 Q938 640 976 588" stroke="#a8c878" stroke-width="3.0" fill="none" opacity="0.58"/><path d="M1170 715 Q1181 629 1226 573" stroke="#5a8a32" stroke-width="1.7" fill="none" opacity="0.58"/><path d="M865 711 Q860 633 838 582" stroke="#cde0a8" stroke-width="3.3" fill="none" opacity="0.56"/><path d="M677 719 Q680 630 691 570" stroke="#8cb85a" stroke-width="3.6" fill="none" opacity="0.57"/><path d="M511 704 Q522 623 565 569" stroke="#8cb85a" stroke-width="1.9" fill="none" opacity="0.54"/><path d="M814 709 Q825 661 871 629" stroke="#5a8a32" stroke-width="2.0" fill="none" opacity="0.44"/><path d="M732 714 Q733 635 741 582" stroke="#b8d48c" stroke-width="1.1" fill="none" opacity="0.71"/><path d="M433 715 Q450 607 518 535" stroke="#b8d48c" stroke-width="3.9" fill="none" opacity="0.70"/><path d="M1318 691 Q1334 624 1395 580" stroke="#8cb85a" stroke-width="3.7" fill="none" opacity="0.65"/><path d="M734 720 Q739 635 761 578" stroke="#cde0a8" stroke-width="2.0" fill="none" opacity="0.46"/><path d="M813 701 Q822 584 861 507" stroke="#2c5016" stroke-width="1.5" fill="none" opacity="0.48"/><path d="M681 709 Q677 595 661 518" stroke="#b8d48c" stroke-width="3.9" fill="none" opacity="0.52"/><path d="M596 709 Q597 589 601 509" stroke="#2c5016" stroke-width="3.2" fill="none" opacity="0.34"/><path d="M488 701 Q488 648 488 612" stroke="#a8c878" stroke-width="1.2" fill="none" opacity="0.70"/><path d="M946 715 Q961 595 1021 516" stroke="#cde0a8" stroke-width="2.8" fill="none" opacity="0.54"/><path d="M1123 696 Q1125 584 1136 509" stroke="#35601c" stroke-width="2.8" fill="none" opacity="0.57"/><path d="M474 720 Q468 626 440 563" stroke="#cde0a8" stroke-width="0.8" fill="none" opacity="0.30"/><path d="M975 707 Q977 593 987 517" stroke="#4a7826" stroke-width="2.7" fill="none" opacity="0.60"/><path d="M255 705 Q254 617 250 559" stroke="#2c5016" stroke-width="2.4" fill="none" opacity="0.36"/><path d="M258 708 Q263 650 285 611" stroke="#2c5016" stroke-width="1.1" fill="none" opacity="0.35"/><path d="M219 706 Q227 598 258 527" stroke="#35601c" stroke-width="2.9" fill="none" opacity="0.61"/><path d="M790 694 Q790 629 786 586" stroke="#35601c" stroke-width="1.7" fill="none" opacity="0.34"/><path d="M1245 707 Q1249 634 1264 586" stroke="#cde0a8" stroke-width="0.9" fill="none" opacity="0.40"/><path d="M534 713 Q528 662 501 628" stroke="#b8d48c" stroke-width="1.6" fill="none" opacity="0.32"/><path d="M1283 716 Q1299 645 1360 598" stroke="#5a8a32" stroke-width="1.8" fill="none" opacity="0.57"/><path d="M1324 705 Q1322 588 1316 511" stroke="#cde0a8" stroke-width="3.0" fill="none" opacity="0.56"/><path d="M559 702 Q551 603 522 537" stroke="#b8d48c" stroke-width="1.1" fill="none" opacity="0.38"/><path d="M511 690 Q513 579 522 504" stroke="#6a9a3c" stroke-width="1.2" fill="none" opacity="0.54"/><path d="M520 702 Q515 649 496 614" stroke="#6a9a3c" stroke-width="2.6" fill="none" opacity="0.47"/><path d="M634 700 Q633 621 630 568" stroke="#35601c" stroke-width="1.9" fill="none" opacity="0.37"/><path d="M968 693 Q982 625 1037 580" stroke="#a8c878" stroke-width="2.6" fill="none" opacity="0.51"/><path d="M1093 697 Q1091 623 1081 573" stroke="#cde0a8" stroke-width="2.0" fill="none" opacity="0.73"/><path d="M271 719 Q269 634 261 578" stroke="#5a8a32" stroke-width="3.0" fill="none" opacity="0.72"/><path d="M1377 708 Q1395 628 1466 575" stroke="#2c5016" stroke-width="1.6" fill="none" opacity="0.57"/><path d="M278 716 Q283 659 304 621" stroke="#2c5016" stroke-width="3.5" fill="none" opacity="0.63"/><path d="M1051 691 Q1047 591 1030 525" stroke="#35601c" stroke-width="2.0" fill="none" opacity="0.34"/><path d="M228 716 Q237 644 274 597" stroke="#4a7826" stroke-width="1.0" fill="none" opacity="0.71"/><path d="M1107 713 Q1118 651 1161 610" stroke="#4a7826" stroke-width="1.5" fill="none" opacity="0.36"/><path d="M983 698 Q999 621 1062 570" stroke="#a8c878" stroke-width="3.8" fill="none" opacity="0.38"/><path d="M493 714 Q509 616 570 551" stroke="#35601c" stroke-width="2.9" fill="none" opacity="0.61"/><path d="M328 715 Q336 642 370 593" stroke="#a8c878" stroke-width="1.7" fill="none" opacity="0.42"/><path d="M832 697 Q835 600 845 535" stroke="#a8c878" stroke-width="2.2" fill="none" opacity="0.64"/><path d="M199 712 Q207 624 240 566" stroke="#a8c878" stroke-width="2.6" fill="none" opacity="0.40"/><path d="M677 706 Q686 591 724 515" stroke="#6a9a3c" stroke-width="3.8" fill="none" opacity="0.35"/><path d="M1049 710 Q1064 597 1123 522" stroke="#35601c" stroke-width="3.9" fill="none" opacity="0.61"/><path d="M32 700 Q33 596 37 526" stroke="#4a7826" stroke-width="2.1" fill="none" opacity="0.63"/><path d="M1377 708 Q1383 645 1406 602" stroke="#6a9a3c" stroke-width="3.8" fill="none" opacity="0.49"/><path d="M1282 711 Q1296 610 1350 542" stroke="#5a8a32" stroke-width="2.4" fill="none" opacity="0.60"/><path d="M268 710 Q281 601 330 529" stroke="#5a8a32" stroke-width="3.2" fill="none" opacity="0.32"/><path d="M964 714 Q970 647 995 603" stroke="#b8d48c" stroke-width="2.5" fill="none" opacity="0.41"/><path d="M63 701 Q60 623 49 571" stroke="#8cb85a" stroke-width="1.2" fill="none" opacity="0.61"/><path d="M661 704 Q653 606 622 540" stroke="#5a8a32" stroke-width="1.2" fill="none" opacity="0.59"/><path d="M957 694 Q965 595 994 529" stroke="#b8d48c" stroke-width="1.9" fill="none" opacity="0.67"/><path d="M748 713 Q757 653 794 613" stroke="#5a8a32" stroke-width="3.5" fill="none" opacity="0.48"/><path d="M269 711 Q274 662 292 629" stroke="#35601c" stroke-width="1.0" fill="none" opacity="0.43"/><path d="M256 711 Q251 631 231 577" stroke="#6a9a3c" stroke-width="2.2" fill="none" opacity="0.56"/><path d="M385 707 Q389 655 406 621" stroke="#5a8a32" stroke-width="1.1" fill="none" opacity="0.62"/><path d="M1352 707 Q1357 651 1376 614" stroke="#cde0a8" stroke-width="2.4" fill="none" opacity="0.65"/><path d="M431 701 Q430 646 428 610" stroke="#8cb85a" stroke-width="2.9" fill="none" opacity="0.34"/><path d="M1026 691 Q1022 614 1005 563" stroke="#6a9a3c" stroke-width="1.4" fill="none" opacity="0.59"/><path d="M1164 718 Q1176 658 1226 618" stroke="#8cb85a" stroke-width="3.2" fill="none" opacity="0.45"/><path d="M238 715 Q240 644 246 596" stroke="#2c5016" stroke-width="3.7" fill="none" opacity="0.68"/><path d="M335 692 Q348 636 399 599" stroke="#cde0a8" stroke-width="3.7" fill="none" opacity="0.73"/><path d="M672 705 Q672 646 671 606" stroke="#4a7826" stroke-width="1.3" fill="none" opacity="0.40"/><path d="M174 709 Q191 632 261 581" stroke="#5a8a32" stroke-width="2.3" fill="none" opacity="0.40"/><path d="M501 691 Q515 599 570 538" stroke="#2c5016" stroke-width="2.2" fill="none" opacity="0.43"/><path d="M906 705 Q907 627 910 575" stroke="#5a8a32" stroke-width="0.8" fill="none" opacity="0.73"/><path d="M227 712 Q219 636 187 586" stroke="#6a9a3c" stroke-width="2.6" fill="none" opacity="0.51"/><path d="M740 706 Q746 627 769 574" stroke="#a8c878" stroke-width="3.9" fill="none" opacity="0.73"/><path d="M848 714 Q857 662 896 627" stroke="#8cb85a" stroke-width="2.6" fill="none" opacity="0.49"/><path d="M496 710 Q511 652 569 613" stroke="#2c5016" stroke-width="3.6" fill="none" opacity="0.31"/><path d="M244 710 Q239 630 215 577" stroke="#6a9a3c" stroke-width="2.6" fill="none" opacity="0.72"/><path d="M484 697 Q483 617 478 564" stroke="#b8d48c" stroke-width="1.4" fill="none" opacity="0.70"/><path d="M747 693 Q746 583 740 510" stroke="#4a7826" stroke-width="1.4" fill="none" opacity="0.60"/><path d="M973 697 Q979 616 1003 562" stroke="#4a7826" stroke-width="3.2" fill="none" opacity="0.71"/><path d="M774 716 Q786 619 838 554" stroke="#a8c878" stroke-width="3.6" fill="none" opacity="0.55"/><path d="M980 713 Q998 656 1069 619" stroke="#2c5016" stroke-width="1.1" fill="none" opacity="0.67"/><path d="M529 695 Q535 578 562 500" stroke="#4a7826" stroke-width="1.2" fill="none" opacity="0.65"/><path d="M61 697 Q53 622 23 572" stroke="#b8d48c" stroke-width="2.3" fill="none" opacity="0.35"/><path d="M170 717 Q188 663 258 627" stroke="#b8d48c" stroke-width="2.6" fill="none" opacity="0.71"/><path d="M1199 695 Q1200 593 1203 526" stroke="#35601c" stroke-width="3.4" fill="none" opacity="0.36"/><path d="M502 712 Q513 596 556 518" stroke="#35601c" stroke-width="3.4" fill="none" opacity="0.46"/><path d="M478 700 Q471 608 442 547" stroke="#b8d48c" stroke-width="1.6" fill="none" opacity="0.39"/><path d="M605 715 Q600 625 580 565" stroke="#35601c" stroke-width="2.4" fill="none" opacity="0.33"/><path d="M342 695 Q357 579 415 503" stroke="#cde0a8" stroke-width="3.5" fill="none" opacity="0.56"/><path d="M330 720 Q329 617 325 549" stroke="#5a8a32" stroke-width="0.8" fill="none" opacity="0.45"/><path d="M191 705 Q204 594 255 520" stroke="#35601c" stroke-width="1.0" fill="none" opacity="0.58"/><path d="M883 708 Q900 599 968 527" stroke="#5a8a32" stroke-width="2.1" fill="none" opacity="0.69"/><path d="M835 692 Q833 621 823 573" stroke="#a8c878" stroke-width="2.7" fill="none" opacity="0.32"/><path d="M218 701 Q225 619 253 565" stroke="#cde0a8" stroke-width="3.8" fill="none" opacity="0.44"/><path d="M450 705 Q448 640 442 597" stroke="#35601c" stroke-width="2.8" fill="none" opacity="0.63"/><path d="M181 702 Q199 649 270 614" stroke="#6a9a3c" stroke-width="2.6" fill="none" opacity="0.54"/><path d="M1320 720 Q1326 669 1353 636" stroke="#4a7826" stroke-width="3.6" fill="none" opacity="0.65"/><path d="M866 709 Q866 635 863 585" stroke="#b8d48c" stroke-width="3.6" fill="none" opacity="0.72"/><path d="M934 699 Q945 596 990 528" stroke="#2c5016" stroke-width="3.5" fill="none" opacity="0.41"/><path d="M1202 711 Q1212 639 1254 591" stroke="#6a9a3c" stroke-width="3.6" fill="none" opacity="0.65"/><path d="M685 717 Q703 611 775 540" stroke="#a8c878" stroke-width="1.2" fill="none" opacity="0.30"/><path d="M1199 704 Q1206 624 1233 570" stroke="#8cb85a" stroke-width="3.8" fill="none" opacity="0.56"/><path d="M181 712 Q188 645 216 601" stroke="#6a9a3c" stroke-width="1.0" fill="none" opacity="0.39"/><path d="M1275 708 Q1276 638 1281 591" stroke="#5a8a32" stroke-width="1.9" fill="none" opacity="0.65"/><path d="M580 716 Q584 663 603 628" stroke="#a8c878" stroke-width="1.7" fill="none" opacity="0.42"/><path d="M12 695 Q23 628 64 583" stroke="#b8d48c" stroke-width="1.0" fill="none" opacity="0.50"/><path d="M1230 698 Q1225 614 1203 558" stroke="#b8d48c" stroke-width="3.1" fill="none" opacity="0.73"/><path d="M821 692 Q836 586 895 515" stroke="#6a9a3c" stroke-width="3.1" fill="none" opacity="0.30"/><path d="M359 709 Q359 660 361 627" stroke="#35601c" stroke-width="1.5" fill="none" opacity="0.45"/><path d="M1029 709 Q1039 632 1077 581" stroke="#6a9a3c" stroke-width="1.4" fill="none" opacity="0.69"/><path d="M1095 693 Q1107 600 1156 539" stroke="#cde0a8" stroke-width="1.6" fill="none" opacity="0.51"/><path d="M-1 718 Q17 629 87 570" stroke="#35601c" stroke-width="2.1" fill="none" opacity="0.62"/><path d="M1149 695 Q1146 645 1136 612" stroke="#2c5016" stroke-width="3.3" fill="none" opacity="0.34"/><path d="M1120 703 Q1127 616 1156 558" stroke="#2c5016" stroke-width="1.3" fill="none" opacity="0.74"/><path d="M785 697 Q798 604 851 543" stroke="#5a8a32" stroke-width="3.2" fill="none" opacity="0.65"/><path d="M413 713 Q417 595 432 516" stroke="#8cb85a" stroke-width="2.0" fill="none" opacity="0.54"/><path d="M363 698 Q358 609 336 551" stroke="#6a9a3c" stroke-width="1.3" fill="none" opacity="0.58"/><path d="M541 719 Q549 604 582 527" stroke="#4a7826" stroke-width="1.0" fill="none" opacity="0.53"/><path d="M757 695 Q759 580 765 503" stroke="#a8c878" stroke-width="3.7" fill="none" opacity="0.69"/><path d="M1178 713 Q1179 627 1184 570" stroke="#b8d48c" stroke-width="2.2" fill="none" opacity="0.69"/><path d="M278 717 Q281 604 289 529" stroke="#b8d48c" stroke-width="1.8" fill="none" opacity="0.71"/><path d="M131 712 Q140 659 175 624" stroke="#cde0a8" stroke-width="3.0" fill="none" opacity="0.46"/><path d="M299 701 Q301 588 308 512" stroke="#b8d48c" stroke-width="0.9" fill="none" opacity="0.31"/><path d="M973 697 Q973 624 975 575" stroke="#cde0a8" stroke-width="2.9" fill="none" opacity="0.43"/><path d="M1372 696 Q1368 607 1352 548" stroke="#8cb85a" stroke-width="3.9" fill="none" opacity="0.36"/><path d="M400 693 Q415 644 473 612" stroke="#b8d48c" stroke-width="1.3" fill="none" opacity="0.61"/><path d="M817 704 Q832 614 891 554" stroke="#b8d48c" stroke-width="3.5" fill="none" opacity="0.63"/><path d="M45 713 Q48 634 61 581" stroke="#a8c878" stroke-width="4.0" fill="none" opacity="0.43"/><path d="M14 693 Q6 575 -25 496" stroke="#8cb85a" stroke-width="1.3" fill="none" opacity="0.63"/><path d="M117 695 Q111 598 88 533" stroke="#6a9a3c" stroke-width="2.9" fill="none" opacity="0.60"/><path d="M535 700 Q543 588 571 513" stroke="#b8d48c" stroke-width="3.3" fill="none" opacity="0.61"/><path d="M33 705 Q36 640 49 597" stroke="#4a7826" stroke-width="3.1" fill="none" opacity="0.32"/><path d="M1232 692 Q1248 636 1316 599" stroke="#a8c878" stroke-width="2.5" fill="none" opacity="0.30"/><path d="M293 706 Q300 613 324 550" stroke="#4a7826" stroke-width="2.5" fill="none" opacity="0.68"/><path d="M1320 692 Q1334 574 1391 496" stroke="#b8d48c" stroke-width="3.1" fill="none" opacity="0.42"/><path d="M228 698 Q221 645 194 610" stroke="#2c5016" stroke-width="1.0" fill="none" opacity="0.66"/><path d="M1313 698 Q1306 627 1278 579" stroke="#5a8a32" stroke-width="2.5" fill="none" opacity="0.55"/><path d="M946 719 Q957 609 1000 535" stroke="#cde0a8" stroke-width="2.2" fill="none" opacity="0.54"/><path d="M516 695 Q531 592 591 523" stroke="#a8c878" stroke-width="3.7" fill="none" opacity="0.59"/><path d="M315 705 Q325 586 365 506" stroke="#cde0a8" stroke-width="4.0" fill="none" opacity="0.67"/><path d="M909 693 Q902 600 873 538" stroke="#35601c" stroke-width="2.1" fill="none" opacity="0.55"/><path d="M939 703 Q943 607 958 543" stroke="#35601c" stroke-width="2.3" fill="none" opacity="0.59"/><path d="M639 700 Q641 613 648 555" stroke="#cde0a8" stroke-width="1.9" fill="none" opacity="0.33"/><path d="M1346 698 Q1360 603 1414 539" stroke="#4a7826" stroke-width="2.8" fill="none" opacity="0.54"/><path d="M293 708 Q308 641 371 597" stroke="#5a8a32" stroke-width="3.5" fill="none" opacity="0.46"/><path d="M805 707 Q799 587 774 507" stroke="#2c5016" stroke-width="2.0" fill="none" opacity="0.39"/><path d="M217 701 Q213 604 197 540" stroke="#5a8a32" stroke-width="1.4" fill="none" opacity="0.73"/><path d="M1178 710 Q1178 596 1180 520" stroke="#6a9a3c" stroke-width="3.5" fill="none" opacity="0.67"/><path d="M152 695 Q147 629 126 584" stroke="#6a9a3c" stroke-width="2.9" fill="none" opacity="0.54"/><path d="M403 710 Q403 642 401 597" stroke="#5a8a32" stroke-width="3.0" fill="none" opacity="0.50"/><path d="M650 714 Q646 611 629 543" stroke="#a8c878" stroke-width="2.0" fill="none" opacity="0.53"/><path d="M313 701 Q315 629 322 580" stroke="#35601c" stroke-width="2.6" fill="none" opacity="0.30"/><path d="M344 708 Q350 638 374 591" stroke="#6a9a3c" stroke-width="1.6" fill="none" opacity="0.42"/><path d="M593 706 Q588 622 565 567" stroke="#a8c878" stroke-width="2.2" fill="none" opacity="0.66"/><path d="M845 701 Q849 650 863 616" stroke="#6a9a3c" stroke-width="0.9" fill="none" opacity="0.64"/><path d="M1338 703 Q1336 611 1331 550" stroke="#b8d48c" stroke-width="2.0" fill="none" opacity="0.56"/><path d="M1275 696 Q1285 578 1327 499" stroke="#6a9a3c" stroke-width="1.0" fill="none" opacity="0.39"/><path d="M1184 692 Q1186 612 1195 559" stroke="#cde0a8" stroke-width="2.4" fill="none" opacity="0.71"/><path d="M1040 691 Q1044 600 1060 540" stroke="#5a8a32" stroke-width="3.0" fill="none" opacity="0.50"/><path d="M1373 695 Q1375 643 1385 607" stroke="#a8c878" stroke-width="2.4" fill="none" opacity="0.67"/><path d="M919 712 Q912 635 884 584" stroke="#8cb85a" stroke-width="2.6" fill="none" opacity="0.65"/><path d="M1058 694 Q1052 630 1028 587" stroke="#35601c" stroke-width="1.1" fill="none" opacity="0.34"/><path d="M1035 707 Q1044 655 1083 620" stroke="#6a9a3c" stroke-width="2.3" fill="none" opacity="0.32"/><path d="M947 703 Q965 612 1037 552" stroke="#35601c" stroke-width="3.6" fill="none" opacity="0.37"/><path d="M448 706 Q466 657 537 625" stroke="#8cb85a" stroke-width="2.5" fill="none" opacity="0.34"/><path d="M517 710 Q519 640 529 594" stroke="#cde0a8" stroke-width="3.0" fill="none" opacity="0.44"/><path d="M328 701 Q334 622 358 569" stroke="#8cb85a" stroke-width="1.4" fill="none" opacity="0.32"/><path d="M732 701 Q736 620 755 566" stroke="#a8c878" stroke-width="2.0" fill="none" opacity="0.66"/><path d="M260 718 Q254 630 227 571" stroke="#6a9a3c" stroke-width="0.8" fill="none" opacity="0.33"/><path d="M1312 715 Q1310 664 1301 630" stroke="#5a8a32" stroke-width="1.7" fill="none" opacity="0.62"/><path d="M1103 708 Q1120 627 1185 573" stroke="#5a8a32" stroke-width="1.5" fill="none" opacity="0.39"/><path d="M232 716 Q228 659 210 621" stroke="#4a7826" stroke-width="3.4" fill="none" opacity="0.52"/><path d="M-0 712 Q-4 611 -19 543" stroke="#b8d48c" stroke-width="3.0" fill="none" opacity="0.60"/><path d="M393 696 Q389 588 372 516" stroke="#b8d48c" stroke-width="2.5" fill="none" opacity="0.51"/><path d="M262 693 Q260 641 251 607" stroke="#8cb85a" stroke-width="3.1" fill="none" opacity="0.50"/><path d="M574 716 Q570 602 552 525" stroke="#a8c878" stroke-width="3.5" fill="none" opacity="0.43"/><path d="M306 707 Q312 637 339 589" stroke="#a8c878" stroke-width="1.8" fill="none" opacity="0.42"/><path d="M748 696 Q758 580 795 503" stroke="#b8d48c" stroke-width="2.1" fill="none" opacity="0.31"/><path d="M512 709 Q518 645 543 602" stroke="#4a7826" stroke-width="1.4" fill="none" opacity="0.37"/><path d="M238 700 Q231 623 203 572" stroke="#6a9a3c" stroke-width="1.2" fill="none" opacity="0.72"/><path d="M1375 718 Q1374 632 1372 575" stroke="#6a9a3c" stroke-width="0.9" fill="none" opacity="0.65"/><path d="M1225 717 Q1224 655 1222 613" stroke="#8cb85a" stroke-width="2.7" fill="none" opacity="0.54"/><path d="M104 694 Q119 627 180 582" stroke="#b8d48c" stroke-width="2.7" fill="none" opacity="0.43"/><path d="M792 693 Q789 645 777 613" stroke="#a8c878" stroke-width="2.9" fill="none" opacity="0.32"/><path d="M446 703 Q458 638 503 594" stroke="#a8c878" stroke-width="1.2" fill="none" opacity="0.67"/><path d="M1113 712 Q1124 631 1170 577" stroke="#4a7826" stroke-width="3.3" fill="none" opacity="0.57"/><path d="M626 691 Q620 606 599 549" stroke="#a8c878" stroke-width="2.1" fill="none" opacity="0.68"/><path d="M87 712 Q88 611 93 544" stroke="#4a7826" stroke-width="1.9" fill="none" opacity="0.68"/><path d="M1203 704 Q1197 646 1175 607" stroke="#b8d48c" stroke-width="1.2" fill="none" opacity="0.52"/><path d="M730 694 Q727 612 712 557" stroke="#2c5016" stroke-width="0.9" fill="none" opacity="0.42"/><path d="M1309 699 Q1327 611 1398 552" stroke="#b8d48c" stroke-width="3.1" fill="none" opacity="0.54"/><path d="M316 693 Q309 637 282 600" stroke="#b8d48c" stroke-width="3.0" fill="none" opacity="0.40"/><path d="M1030 695 Q1023 628 994 583" stroke="#cde0a8" stroke-width="2.8" fill="none" opacity="0.35"/><path d="M778 694 Q775 598 766 534" stroke="#b8d48c" stroke-width="2.7" fill="none" opacity="0.65"/><path d="M975 692 Q983 626 1013 582" stroke="#4a7826" stroke-width="0.9" fill="none" opacity="0.58"/><path d="M949 714 Q962 642 1014 593" stroke="#5a8a32" stroke-width="2.7" fill="none" opacity="0.38"/><path d="M424 718 Q417 613 389 544" stroke="#b8d48c" stroke-width="1.3" fill="none" opacity="0.53"/><path d="M214 714 Q211 610 200 542" stroke="#b8d48c" stroke-width="3.0" fill="none" opacity="0.62"/><path d="M74 690 Q67 579 39 504" stroke="#2c5016" stroke-width="3.3" fill="none" opacity="0.71"/><path d="M1032 709 Q1040 647 1073 605" stroke="#6a9a3c" stroke-width="3.3" fill="none" opacity="0.34"/><path d="M984 700 Q1002 641 1070 601" stroke="#5a8a32" stroke-width="1.2" fill="none" opacity="0.67"/><path d="M1292 717 Q1306 616 1360 548" stroke="#a8c878" stroke-width="2.2" fill="none" opacity="0.67"/><path d="M1078 716 Q1095 647 1163 600" stroke="#2c5016" stroke-width="2.9" fill="none" opacity="0.58"/><path d="M75 713 Q87 608 133 537" stroke="#b8d48c" stroke-width="1.6" fill="none" opacity="0.56"/><path d="M766 716 Q783 627 848 567" stroke="#35601c" stroke-width="2.1" fill="none" opacity="0.65"/><path d="M1091 710 Q1105 595 1158 517" stroke="#cde0a8" stroke-width="3.8" fill="none" opacity="0.40"/><path d="M921 714 Q936 618 998 554" stroke="#cde0a8" stroke-width="3.3" fill="none" opacity="0.30"/><path d="M665 690 Q678 635 730 597" stroke="#cde0a8" stroke-width="2.1" fill="none" opacity="0.43"/><path d="M184 706 Q186 652 195 616" stroke="#5a8a32" stroke-width="2.8" fill="none" opacity="0.43"/><path d="M103 698 Q107 600 121 534" stroke="#2c5016" stroke-width="3.4" fill="none" opacity="0.35"/><path d="M936 691 Q933 584 920 512" stroke="#8cb85a" stroke-width="1.9" fill="none" opacity="0.37"/><path d="M214 701 Q229 594 289 523" stroke="#cde0a8" stroke-width="1.8" fill="none" opacity="0.44"/><path d="M1207 714 Q1221 622 1278 561" stroke="#a8c878" stroke-width="2.1" fill="none" opacity="0.30"/><path d="M1175 693 Q1182 627 1208 584" stroke="#8cb85a" stroke-width="3.2" fill="none" opacity="0.60"/><path d="M1358 712 Q1368 610 1405 542" stroke="#a8c878" stroke-width="3.8" fill="none" opacity="0.70"/><path d="M913 692 Q916 599 931 537" stroke="#8cb85a" stroke-width="2.0" fill="none" opacity="0.60"/><path d="M865 701 Q874 616 913 559" stroke="#5a8a32" stroke-width="2.4" fill="none" opacity="0.61"/><path d="M5 716 Q0 604 -19 530" stroke="#cde0a8" stroke-width="2.2" fill="none" opacity="0.64"/><path d="M1228 712 Q1220 610 1192 542" stroke="#6a9a3c" stroke-width="2.3" fill="none" opacity="0.30"/><path d="M1291 698 Q1307 637 1371 596" stroke="#2c5016" stroke-width="0.9" fill="none" opacity="0.48"/><path d="M1026 709 Q1038 641 1085 596" stroke="#8cb85a" stroke-width="3.3" fill="none" opacity="0.31"/><path d="M747 702 Q764 648 831 612" stroke="#cde0a8" stroke-width="2.4" fill="none" opacity="0.74"/><path d="M484 717 Q498 646 553 598" stroke="#5a8a32" stroke-width="3.4" fill="none" opacity="0.66"/><path d="M466 694 Q481 609 540 552" stroke="#a8c878" stroke-width="1.8" fill="none" opacity="0.53"/><path d="M934 717 Q951 627 1020 567" stroke="#6a9a3c" stroke-width="3.9" fill="none" opacity="0.38"/><path d="M413 718 Q414 656 415 615" stroke="#5a8a32" stroke-width="2.1" fill="none" opacity="0.61"/><path d="M487 700 Q491 594 508 524" stroke="#4a7826" stroke-width="1.5" fill="none" opacity="0.71"/><path d="M610 715 Q623 621 672 559" stroke="#6a9a3c" stroke-width="0.9" fill="none" opacity="0.43"/><path d="M730 710 Q733 601 743 528" stroke="#4a7826" stroke-width="1.7" fill="none" opacity="0.46"/><path d="M1264 706 Q1273 637 1306 591" stroke="#8cb85a" stroke-width="2.2" fill="none" opacity="0.31"/><path d="M725 711 Q733 641 763 594" stroke="#6a9a3c" stroke-width="1.6" fill="none" opacity="0.41"/><path d="M78 706 Q87 604 126 536" stroke="#cde0a8" stroke-width="3.5" fill="none" opacity="0.62"/><path d="M1282 695 Q1293 634 1336 594" stroke="#4a7826" stroke-width="3.3" fill="none" opacity="0.48"/><path d="M1296 712 Q1299 640 1308 591" stroke="#6a9a3c" stroke-width="1.9" fill="none" opacity="0.38"/><path d="M1200 706 Q1210 620 1247 563" stroke="#8cb85a" stroke-width="1.2" fill="none" opacity="0.45"/><path d="M72 702 Q86 618 143 562" stroke="#b8d48c" stroke-width="2.6" fill="none" opacity="0.48"/><path d="M783 698 Q796 589 846 517" stroke="#a8c878" stroke-width="1.3" fill="none" opacity="0.60"/><path d="M1036 705 Q1051 592 1113 517" stroke="#cde0a8" stroke-width="3.6" fill="none" opacity="0.36"/><path d="M966 711 Q965 619 962 558" stroke="#4a7826" stroke-width="3.3" fill="none" opacity="0.57"/><path d="M693 708 Q693 595 693 520" stroke="#6a9a3c" stroke-width="3.0" fill="none" opacity="0.74"/><path d="M1103 701 Q1097 602 1072 537" stroke="#6a9a3c" stroke-width="1.5" fill="none" opacity="0.51"/><path d="M1050 703 Q1067 619 1137 563" stroke="#2c5016" stroke-width="2.7" fill="none" opacity="0.31"/><path d="M733 704 Q733 621 731 566" stroke="#6a9a3c" stroke-width="3.9" fill="none" opacity="0.54"/><path d="M302 707 Q302 600 299 528" stroke="#2c5016" stroke-width="3.1" fill="none" opacity="0.40"/></g><g filter="url(#blur4)"><ellipse cx="30" cy="640" rx="40" ry="60" fill="#3f6a2a" opacity="0.45"/><ellipse cx="180" cy="585" rx="90" ry="25" fill="#c8d8b8" opacity="0.35"/><ellipse cx="1060" cy="640" rx="120" ry="35" fill="#b0cc98" opacity="0.3"/></g><g filter="url(#blur2)"><path d="M135 685 C150 640 170 600 195 560" stroke="#335f22" stroke-width="9" fill="none" opacity="0.8"/><ellipse cx="120" cy="652" rx="6" ry="4.5" fill="#6a9448" opacity="0.85" transform="rotate(-30 120 652)"/><ellipse cx="130" cy="644" rx="6" ry="4.5" fill="#4f7a36" opacity="0.85" transform="rotate(-27 130 644)"/><ellipse cx="139" cy="637" rx="6" ry="4.5" fill="#5a8540" opacity="0.85" transform="rotate(-24 139 637)"/><ellipse cx="149" cy="631" rx="6" ry="4.5" fill="#8aae68" opacity="0.85" transform="rotate(-21 149 631)"/><ellipse cx="158" cy="626" rx="6" ry="4.5" fill="#5a8540" opacity="0.85" transform="rotate(-19 158 626)"/><ellipse cx="168" cy="621" rx="6" ry="4.5" fill="#4f7a36" opacity="0.85" transform="rotate(-16 168 621)"/><ellipse cx="177" cy="618" rx="6" ry="4.5" fill="#5a8540" opacity="0.85" transform="rotate(-13 177 618)"/><ellipse cx="187" cy="615" rx="6" ry="4.5" fill="#4f7a36" opacity="0.85" transform="rotate(-10 187 615)"/><ellipse cx="196" cy="613" rx="6" ry="4.5" fill="#4f7a36" opacity="0.85" transform="rotate(-7 196 613)"/><ellipse cx="206" cy="611" rx="6" ry="4.5" fill="#8aae68" opacity="0.85" transform="rotate(-4 206 611)"/><ellipse cx="215" cy="611" rx="6" ry="4.5" fill="#8aae68" opacity="0.85" transform="rotate(-1 215 611)"/><ellipse cx="225" cy="611" rx="6" ry="4.5" fill="#8aae68" opacity="0.85" transform="rotate(1 225 611)"/><ellipse cx="234" cy="612" rx="6" ry="4.5" fill="#6a9448" opacity="0.85" transform="rotate(4 234 612)"/><ellipse cx="244" cy="615" rx="6" ry="4.5" fill="#4f7a36" opacity="0.85" transform="rotate(7 244 615)"/><ellipse cx="253" cy="617" rx="6" ry="4.5" fill="#5a8540" opacity="0.85" transform="rotate(10 253 617)"/><ellipse cx="263" cy="621" rx="6" ry="4.5" fill="#5a8540" opacity="0.85" transform="rotate(13 263 621)"/><ellipse cx="272" cy="625" rx="6" ry="4.5" fill="#5a8540" opacity="0.85" transform="rotate(16 272 625)"/><ellipse cx="282" cy="631" rx="6" ry="4.5" fill="#4f7a36" opacity="0.85" transform="rotate(19 282 631)"/><ellipse cx="291" cy="637" rx="6" ry="4.5" fill="#8aae68" opacity="0.85" transform="rotate(21 291 637)"/><ellipse cx="301" cy="644" rx="6" ry="4.5" fill="#6a9448" opacity="0.85" transform="rotate(24 301 644)"/><ellipse cx="310" cy="651" rx="6" ry="4.5" fill="#8aae68" opacity="0.85" transform="rotate(27 310 651)"/><ellipse cx="320" cy="660" rx="6" ry="4.5" fill="#8aae68" opacity="0.85" transform="rotate(30 320 660)"/><path d="M1331 690 Q1339 640 1352 575" stroke="#2c5016" stroke-width="3.8" fill="none" opacity="0.28"/><path d="M501 690 Q507 640 495 632" stroke="#2c5016" stroke-width="2.0" fill="none" opacity="0.44"/><path d="M1146 690 Q1152 640 1175 576" stroke="#2c5016" stroke-width="4.3" fill="none" opacity="0.46"/><path d="M636 690 Q643 640 627 619" stroke="#2c5016" stroke-width="3.8" fill="none" opacity="0.25"/><path d="M696 690 Q697 640 727 611" stroke="#2c5016" stroke-width="4.2" fill="none" opacity="0.38"/><path d="M906 690 Q911 640 924 585" stroke="#2c5016" stroke-width="3.1" fill="none" opacity="0.28"/><path d="M1094 690 Q1099 640 1105 562" stroke="#2c5016" stroke-width="4.1" fill="none" opacity="0.44"/><path d="M684 690 Q692 640 692 631" stroke="#2c5016" stroke-width="3.5" fill="none" opacity="0.27"/><path d="M679 690 Q679 640 714 638" stroke="#2c5016" stroke-width="4.5" fill="none" opacity="0.38"/><path d="M590 690 Q590 640 597 613" stroke="#2c5016" stroke-width="4.8" fill="none" opacity="0.30"/><path d="M617 690 Q625 640 633 622" stroke="#2c5016" stroke-width="4.2" fill="none" opacity="0.29"/><path d="M1256 690 Q1258 640 1253 569" stroke="#2c5016" stroke-width="4.2" fill="none" opacity="0.38"/><path d="M359 690 Q366 640 397 567" stroke="#2c5016" stroke-width="4.3" fill="none" opacity="0.30"/><path d="M922 690 Q930 640 955 587" stroke="#2c5016" stroke-width="3.7" fill="none" opacity="0.37"/><path d="M1124 690 Q1133 640 1115 576" stroke="#2c5016" stroke-width="3.1" fill="none" opacity="0.47"/><path d="M431 690 Q439 640 469 595" stroke="#2c5016" stroke-width="3.7" fill="none" opacity="0.48"/><path d="M1038 690 Q1047 640 1066 606" stroke="#2c5016" stroke-width="4.2" fill="none" opacity="0.47"/><path d="M505 690 Q509 640 538 639" stroke="#2c5016" stroke-width="4.2" fill="none" opacity="0.37"/><path d="M1240 690 Q1244 640 1236 600" stroke="#2c5016" stroke-width="3.1" fill="none" opacity="0.42"/><path d="M1156 690 Q1165 640 1147 605" stroke="#2c5016" stroke-width="4.2" fill="none" opacity="0.31"/><path d="M1093 690 Q1098 640 1095 633" stroke="#2c5016" stroke-width="2.6" fill="none" opacity="0.25"/><path d="M812 690 Q813 640 849 637" stroke="#2c5016" stroke-width="4.3" fill="none" opacity="0.26"/><path d="M905 690 Q908 640 915 563" stroke="#2c5016" stroke-width="3.4" fill="none" opacity="0.37"/><path d="M1318 690 Q1324 640 1352 568" stroke="#2c5016" stroke-width="2.4" fill="none" opacity="0.38"/><path d="M966 690 Q966 640 982 637" stroke="#2c5016" stroke-width="3.1" fill="none" opacity="0.47"/><path d="M405 690 Q400 640 427 567" stroke="#2c5016" stroke-width="3.7" fill="none" opacity="0.40"/><path d="M1148 690 Q1151 640 1173 613" stroke="#2c5016" stroke-width="3.8" fill="none" opacity="0.36"/><path d="M1023 690 Q1026 640 1023 575" stroke="#2c5016" stroke-width="3.5" fill="none" opacity="0.46"/><path d="M546 690 Q551 640 572 614" stroke="#2c5016" stroke-width="4.9" fill="none" opacity="0.40"/><path d="M419 690 Q422 640 443 567" stroke="#2c5016" stroke-width="2.7" fill="none" opacity="0.47"/><path d="M1346 690 Q1342 640 1350 585" stroke="#2c5016" stroke-width="2.9" fill="none" opacity="0.37"/><path d="M925 690 Q925 640 925 566" stroke="#2c5016" stroke-width="2.1" fill="none" opacity="0.42"/><path d="M1123 690 Q1121 640 1132 639" stroke="#2c5016" stroke-width="4.8" fill="none" opacity="0.39"/><path d="M548 690 Q554 640 575 566" stroke="#2c5016" stroke-width="2.1" fill="none" opacity="0.26"/><path d="M1083 690 Q1088 640 1080 633" stroke="#2c5016" stroke-width="4.4" fill="none" opacity="0.26"/><path d="M969 690 Q969 640 972 571" stroke="#2c5016" stroke-width="4.4" fill="none" opacity="0.46"/><path d="M359 690 Q360 640 357 573" stroke="#2c5016" stroke-width="4.8" fill="none" opacity="0.41"/><path d="M819 690 Q823 640 847 620" stroke="#2c5016" stroke-width="3.0" fill="none" opacity="0.45"/><path d="M344 690 Q347 640 351 604" stroke="#2c5016" stroke-width="3.1" fill="none" opacity="0.45"/><path d="M332 690 Q338 640 334 587" stroke="#2c5016" stroke-width="2.2" fill="none" opacity="0.29"/><path d="M367 690 Q374 640 378 587" stroke="#2c5016" stroke-width="2.2" fill="none" opacity="0.28"/><path d="M803 690 Q801 640 796 613" stroke="#2c5016" stroke-width="2.7" fill="none" opacity="0.48"/><path d="M1292 690 Q1295 640 1321 611" stroke="#2c5016" stroke-width="3.9" fill="none" opacity="0.30"/><path d="M1110 690 Q1118 640 1136 595" stroke="#2c5016" stroke-width="2.4" fill="none" opacity="0.49"/><path d="M961 690 Q965 640 959 636" stroke="#2c5016" stroke-width="2.9" fill="none" opacity="0.35"/><path d="M683 690 Q692 640 678 629" stroke="#2c5016" stroke-width="3.9" fill="none" opacity="0.40"/><path d="M1008 690 Q1014 640 1005 566" stroke="#2c5016" stroke-width="2.2" fill="none" opacity="0.35"/><path d="M411 690 Q416 640 427 566" stroke="#2c5016" stroke-width="2.2" fill="none" opacity="0.39"/><path d="M1076 690 Q1081 640 1092 630" stroke="#2c5016" stroke-width="4.8" fill="none" opacity="0.36"/><path d="M1260 690 Q1258 640 1269 616" stroke="#2c5016" stroke-width="2.5" fill="none" opacity="0.50"/><path d="M1237 690 Q1245 640 1250 586" stroke="#2c5016" stroke-width="2.6" fill="none" opacity="0.35"/><path d="M1140 690 Q1137 640 1141 588" stroke="#2c5016" stroke-width="3.0" fill="none" opacity="0.41"/><path d="M1204 690 Q1200 640 1198 623" stroke="#2c5016" stroke-width="4.0" fill="none" opacity="0.33"/><path d="M602 690 Q597 640 616 627" stroke="#2c5016" stroke-width="2.2" fill="none" opacity="0.31"/><path d="M422 690 Q426 640 415 584" stroke="#2c5016" stroke-width="2.8" fill="none" opacity="0.48"/><path d="M1297 690 Q1297 640 1314 574" stroke="#2c5016" stroke-width="3.1" fill="none" opacity="0.43"/><path d="M713 690 Q710 640 736 630" stroke="#2c5016" stroke-width="4.7" fill="none" opacity="0.29"/><path d="M1116 690 Q1125 640 1107 612" stroke="#2c5016" stroke-width="4.7" fill="none" opacity="0.44"/><path d="M1211 690 Q1210 640 1246 581" stroke="#2c5016" stroke-width="2.0" fill="none" opacity="0.27"/><path d="M720 690 Q720 640 724 598" stroke="#2c5016" stroke-width="3.5" fill="none" opacity="0.28"/><path d="M39 690 Q41 640 45 589" stroke="#2c5016" stroke-width="6.7" fill="none" opacity="0.43"/><path d="M30 690 Q26 640 27 576" stroke="#2c5016" stroke-width="4.8" fill="none" opacity="0.30"/><path d="M24 690 Q20 640 34 589" stroke="#2c5016" stroke-width="3.9" fill="none" opacity="0.37"/><path d="M70 690 Q79 640 75 564" stroke="#2c5016" stroke-width="4.7" fill="none" opacity="0.26"/><path d="M37 690 Q39 640 39 566" stroke="#2c5016" stroke-width="4.9" fill="none" opacity="0.34"/><path d="M66 690 Q73 640 62 608" stroke="#2c5016" stroke-width="5.5" fill="none" opacity="0.27"/><path d="M20 690 Q26 640 12 602" stroke="#2c5016" stroke-width="4.9" fill="none" opacity="0.30"/><path d="M36 690 Q40 640 58 614" stroke="#2c5016" stroke-width="5.6" fill="none" opacity="0.39"/><path d="M2 690 Q7 640 23 600" stroke="#2c5016" stroke-width="3.6" fill="none" opacity="0.32"/><path d="M27 690 Q35 640 30 563" stroke="#2c5016" stroke-width="6.4" fill="none" opacity="0.38"/><path d="M46 690 Q51 640 36 588" stroke="#2c5016" stroke-width="5.9" fill="none" opacity="0.34"/><path d="M60 690 Q59 640 89 610" stroke="#2c5016" stroke-width="4.2" fill="none" opacity="0.31"/><path d="M14 690 Q10 640 5 570" stroke="#2c5016" stroke-width="4.4" fill="none" opacity="0.35"/><path d="M5 690 Q5 640 29 605" stroke="#2c5016" stroke-width="5.7" fill="none" opacity="0.29"/><path d="M70 676 C100 668 125 660 145 655" stroke="#eef4e4" stroke-width="3" fill="none" opacity="0.7"/><path d="M1012 685 L1022 592" stroke="#2f5a1f" stroke-width="2.6" fill="none" opacity="0.6"/><path d="M1100 685 L1101 592" stroke="#2f5a1f" stroke-width="2.9" fill="none" opacity="0.6"/><path d="M1108 685 L1116 592" stroke="#2f5a1f" stroke-width="2.8" fill="none" opacity="0.6"/><path d="M1150 685 L1161 592" stroke="#2f5a1f" stroke-width="4.3" fill="none" opacity="0.6"/><path d="M1210 685 L1203 592" stroke="#2f5a1f" stroke-width="2.5" fill="none" opacity="0.6"/><path d="M1232 685 L1232 592" stroke="#2f5a1f" stroke-width="4.1" fill="none" opacity="0.6"/><path d="M1290 685 L1293 592" stroke="#2f5a1f" stroke-width="4.3" fill="none" opacity="0.6"/><path d="M945 685 L942 592" stroke="#2f5a1f" stroke-width="4.5" fill="none" opacity="0.6"/><path d="M985 685 L980 592" stroke="#2f5a1f" stroke-width="4.4" fill="none" opacity="0.6"/><path d="M960 678 C1000 660 1050 640 1105 628" stroke="#5aa030" stroke-width="7" fill="none" opacity="0.8"/><path d="M238 609 L175 569" stroke="#dfe8d4" stroke-width="0.9" fill="none" opacity="0.35"/><path d="M195 609 L102 569" stroke="#dfe8d4" stroke-width="0.9" fill="none" opacity="0.35"/><path d="M173 616 L102 578" stroke="#dfe8d4" stroke-width="0.9" fill="none" opacity="0.35"/><path d="M315 652 L204 563" stroke="#dfe8d4" stroke-width="0.9" fill="none" opacity="0.35"/><path d="M267 619 L160 566" stroke="#dfe8d4" stroke-width="0.9" fill="none" opacity="0.35"/><path d="M136 639 L120 575" stroke="#dfe8d4" stroke-width="0.9" fill="none" opacity="0.35"/><path d="M169 618 L119 561" stroke="#dfe8d4" stroke-width="0.9" fill="none" opacity="0.35"/><path d="M149 629 L124 579" stroke="#dfe8d4" stroke-width="0.9" fill="none" opacity="0.35"/><path d="M259 615 L142 566" stroke="#dfe8d4" stroke-width="0.9" fill="none" opacity="0.35"/><path d="M280 625 L285 578" stroke="#dfe8d4" stroke-width="0.9" fill="none" opacity="0.35"/><path d="M134 640 L109 559" stroke="#dfe8d4" stroke-width="0.9" fill="none" opacity="0.35"/><path d="M147 631 L27 564" stroke="#dfe8d4" stroke-width="0.9" fill="none" opacity="0.35"/><path d="M179 614 L141 573" stroke="#dfe8d4" stroke-width="0.9" fill="none" opacity="0.35"/><path d="M234 608 L166 567" stroke="#dfe8d4" stroke-width="0.9" fill="none" opacity="0.35"/><path d="M223 607 L189 564" stroke="#dfe8d4" stroke-width="0.9" fill="none" opacity="0.35"/><path d="M222 607 L170 566" stroke="#dfe8d4" stroke-width="0.9" fill="none" opacity="0.35"/><path d="M235 609 L141 565" stroke="#dfe8d4" stroke-width="0.9" fill="none" opacity="0.35"/><path d="M288 630 L292 571" stroke="#dfe8d4" stroke-width="0.9" fill="none" opacity="0.35"/><path d="M200 608 L204 561" stroke="#dfe8d4" stroke-width="0.9" fill="none" opacity="0.35"/><path d="M280 626 L248 556" stroke="#dfe8d4" stroke-width="0.9" fill="none" opacity="0.35"/><path d="M253 613 L153 563" stroke="#dfe8d4" stroke-width="0.9" fill="none" opacity="0.35"/><path d="M299 639 L232 564" stroke="#dfe8d4" stroke-width="0.9" fill="none" opacity="0.35"/><path d="M268 619 L272 577" stroke="#dfe8d4" stroke-width="0.9" fill="none" opacity="0.35"/><path d="M211 607 L126 579" stroke="#dfe8d4" stroke-width="0.9" fill="none" opacity="0.35"/><path d="M311 648 L193 579" stroke="#dfe8d4" stroke-width="0.9" fill="none" opacity="0.35"/><path d="M226 607 L152 558" stroke="#dfe8d4" stroke-width="0.9" fill="none" opacity="0.35"/><path d="M266 618 L188 573" stroke="#dfe8d4" stroke-width="0.9" fill="none" opacity="0.35"/><path d="M194 610 L133 564" stroke="#dfe8d4" stroke-width="0.9" fill="none" opacity="0.35"/><path d="M315 652 L274 577" stroke="#dfe8d4" stroke-width="0.9" fill="none" opacity="0.35"/><path d="M142 634 L83 577" stroke="#dfe8d4" stroke-width="0.9" fill="none" opacity="0.35"/></g></svg>
<div id="panel" class="a">
 <svg class="a" style="left:3.5px;top:3.5px" width="22" height="22" viewBox="0 0 22 22">
  <path d="M0.5 11A10.5 10.5 0 1 1 11 21.5H2.5A2 2 0 0 1 0.5 19.5Z" fill="#294172"/>
  <path d="M13.2 5.2a3 3 0 1 1 0 5.8" stroke="#3c6eb4" stroke-width="2" fill="none"/>
  <path d="M8.8 16.8a3 3 0 1 1 0-5.8" stroke="#3c6eb4" stroke-width="2" fill="none"/>
  <path d="M6.5 18.3c2.6 0 4.3-1.5 4.3-4.3V8.5c0-2.2 1.4-3.5 3.2-3.5 1.6 0 2.6 0.8 2.6 0.8" stroke="#fff" stroke-width="2.2" fill="none" stroke-linecap="round"/>
  <path d="M7 11.5h7" stroke="#fff" stroke-width="2.2"/>
 </svg>
 <div class="a" style="left:331px;top:2px;width:85px;height:25px;background:#93cde9;border-radius:3px"></div>
 <span class="t mi" style="left:36px">Файл</span>
 <span class="t mi" style="left:88px">Правка</span>
 <span class="t mi" style="left:154px">Вид</span>
 <span class="t mi" style="left:197px">Переход</span>
 <span class="t mi" style="left:272px">Сервис</span>
 <span class="t mi" style="left:337px">Настройка</span>
 <span class="t mi" style="left:426px">Справка</span>
 <!-- tasks -->
 <svg class="a" style="left:854px;top:7px" width="16" height="15" viewBox="0 0 16 15">
  <path d="M0 0h6l1.5 1.5H16V15H0Z" fill="#1f78b4"/>
  <rect x="0" y="3" width="16" height="12" fill="#3da7ea"/>
  <rect x="0" y="13.5" width="16" height="1.5" fill="#1c6aa8"/>
 </svg>
 <span class="t mi" style="left:875px">Домашняя папк...</span>
 <div class="a" style="left:849px;top:24px;width:158px;height:3px;background:#5cb6e6"></div>
 <div class="a" style="left:1014px;top:7px;width:16px;height:16px;background:#31363b;border-radius:1px"></div>
 <svg class="a" style="left:1014px;top:7px" width="16" height="16" viewBox="0 0 16 16"><path d="M6 4l4 4-4 4" stroke="#bbb" stroke-width="1" fill="none"/></svg>
 <span class="t mi" style="left:1035px;letter-spacing:0.3px">aleks : bash — Ко...</span>
 <div class="a" style="left:1009px;top:24px;width:158px;height:3px;background:#c4c5c3"></div>
 <!-- systray -->
 <svg class="a" style="left:1179px;top:7px" width="18" height="16" viewBox="0 0 18 16" fill="none" stroke="#232627" stroke-width="1.2">
  <rect x="5.5" y="0.6" width="11.8" height="11" />
  <rect x="0.6" y="0.6" width="4" height="4" fill="#e3e4e0"/>
  <path d="M2.6 4.6v9.5h3M9 14.8h5M11.5 11.6v3" />
 </svg>
 <span class="a" style="left:1204px;top:4px;font-size:19px;line-height:22px;letter-spacing:0.3px">us</span>
 <svg class="a" style="left:1232px;top:7px" width="17" height="16" viewBox="0 0 17 16">
  <path d="M0.5 5h3l5-4.5v15l-5-4.5h-3z" fill="#232627"/>
  <path d="M11 4.5a4.5 4.5 0 0 1 0 7" stroke="#232627" stroke-width="1.3" fill="none"/>
  <path d="M13.2 2a8 8 0 0 1 0 12" stroke="#232627" stroke-width="1.3" fill="none"/>
 </svg>
 <svg class="a" style="left:1259px;top:6px" width="15" height="17" viewBox="0 0 15 17" fill="none" stroke="#232627" stroke-width="1.3">
  <rect x="0.7" y="2.7" width="13.6" height="13.6"/>
  <rect x="3.5" y="0.5" width="8" height="3" fill="#232627"/>
  <path d="M3.5 7.5h8M3.5 10h8M3.5 12.5h4"/>
 </svg>
 <svg class="a" style="left:1286px;top:12px" width="13" height="7" viewBox="0 0 13 7"><path d="M0 0h13l-6.5 7z" fill="#232627"/></svg>
 <span class="a" style="left:1306px;top:4px;font-size:19px;line-height:22px;letter-spacing:1.4px">19:25</span>
</div>

<div class="a" style="left:720px;top:80px;width:643px;height:513px;border-radius:0 0 3px 3px;background:#eff0f1;box-shadow:0 0 5px rgba(0,0,0,0.35)"></div>
<div class="a" style="left:723px;top:109px;width:640px;height:479px;background:#232627"></div>
<span class="t" style="left:968px;top:87px;color:#808080;letter-spacing:0.1px">aleks : bash — Konsole</span>
<svg class="a" style="left:1294px;top:90px" width="13" height="8" viewBox="0 0 13 8"><path d="M1 1l5.5 5.5L12 1" stroke="#4d4d4d" stroke-width="1.2" fill="none"/></svg>
<svg class="a" style="left:1319px;top:89px" width="13" height="8" viewBox="0 0 13 8"><path d="M1 7l5.5-5.5L12 7" stroke="#4d4d4d" stroke-width="1.2" fill="none"/></svg>
<svg class="a" style="left:1339px;top:84px" width="20" height="20" viewBox="0 0 20 20"><circle cx="10" cy="10" r="9" fill="#7f7f7f"/><path d="M5.5 5.5l9 9M14.5 5.5l-9 9" stroke="#fff" stroke-width="1.4"/></svg>
<span class="t" style="left:725.6px;top:111.5px;color:#eff0f1;font-family:'Liberation Mono',monospace;letter-spacing:0.1px;font-size:13px">[aleks@fedy ~]$ </span>
<div class="a" style="left:852px;top:111px;width:8px;height:16px;border:1px solid #eff0f1"></div>
<div class="a" style="left:757px;top:80px;width:60px;height:29px;background:linear-gradient(90deg,rgba(0,0,0,0.28),rgba(0,0,0,0.12) 30%,rgba(0,0,0,0.03) 70%,rgba(0,0,0,0))"></div>
<div class="a" style="left:1351px;top:116px;width:3px;height:466px;background:#7e8182;border-radius:2px"></div>
<div class="a" style="left:3px;top:28px;width:754px;height:533px;border-radius:0 0 3px 0;background:#eff0f1;box-shadow:0 0 5px rgba(0,0,0,0.35)"></div>
<div class="a" style="left:3px;top:28px;width:754px;height:29px;background:linear-gradient(180deg,#2f94cc 0px,#4fc2f8 2px,#4dbdf4 12px,#3eafe9 29px)"></div>
<svg class="a" style="left:8px;top:34px" width="18" height="16" viewBox="0 0 18 16"><path d="M0 0h7l1.5 2H18v14H0z" fill="#1d6fa8"/><rect x="1" y="3" width="16" height="2.2" fill="#f2f5f8"/><path d="M0 5h7l1.5-1.2H18V16H0z" fill="#3b9de6"/><rect x="0" y="15" width="18" height="1" fill="#1565a8"/></svg>
<span class="t" style="left:284px;top:34px;color:#fff;letter-spacing:0.5px">Домашняя папка — Dolphin</span>
<svg class="a" style="left:710px;top:37px" width="13" height="8" viewBox="0 0 13 8"><path d="M1 7l5.5-5.5L12 7" stroke="#fff" stroke-width="1.2" fill="none"/></svg>
<svg class="a" style="left:729px;top:32px" width="20" height="20" viewBox="0 0 20 20"><circle cx="10" cy="10" r="9" fill="#fff"/><path d="M5.5 5.5l9 9M14.5 5.5l-9 9" stroke="#3daee9" stroke-width="1.4"/></svg>
<svg class="a" style="left:17px;top:68px" width="11" height="16" viewBox="0 0 11 16"><path d="M10 0.5L2 8l8 7.5" stroke="#a5a6a8" stroke-width="1.1" fill="none"/></svg>
<svg class="a" style="left:51px;top:68px" width="11" height="16" viewBox="0 0 11 16"><path d="M1 0.5L9 8l-8 7.5" stroke="#a5a6a8" stroke-width="1.1" fill="none"/></svg>
<div class="a" style="left:77px;top:59px;width:1px;height:33px;background:#c9cacb"></div>
<div class="a" style="left:82px;top:60px;width:32px;height:32px;background:#c8c9ca;border-radius:3px"></div>
<svg class="a" style="left:90px;top:68px" width="16" height="16" viewBox="0 0 16 16"><rect x="0.5" y="0.5" width="6" height="6" fill="#c8c9ca" stroke="#232627"/><rect x="9" y="0" width="7" height="7" fill="#232627"/><rect x="0" y="9" width="7" height="7" fill="#232627"/><rect x="9.5" y="9.5" width="6" height="6" fill="#c8c9ca" stroke="#232627"/></svg>
<svg class="a" style="left:124px;top:68px" width="16" height="16" viewBox="0 0 16 16"><rect x="0.5" y="0.5" width="6" height="6" fill="none" stroke="#232627"/><rect x="0" y="9" width="7" height="7" fill="#232627"/><path d="M9 1.5h7M9 5.5h7M9 10.5h7M9 14.5h4" stroke="#232627"/></svg>
<svg class="a" style="left:158px;top:68px" width="16" height="16" viewBox="0 0 16 16"><rect x="0.5" y="0.5" width="6" height="6" fill="none" stroke="#232627"/><rect x="9.5" y="0.5" width="6" height="6" fill="none" stroke="#232627"/><rect x="9" y="9" width="7" height="7" fill="#232627"/><path d="M3.5 7v5.5H9" stroke="#232627" fill="none"/></svg>
<div class="a" style="left:187px;top:59px;width:1px;height:33px;background:#c9cacb"></div>
<svg class="a" style="left:203px;top:68px" width="17" height="17" viewBox="0 0 17 17"><circle cx="6.5" cy="6.5" r="5.8" stroke="#232627" stroke-width="1.2" fill="none"/><path d="M10.8 10.8l5.7 5.7" stroke="#232627" stroke-width="1.3"/></svg>
<span class="t" style="left:227px;top:68px;">Найти</span>
<div class="a" style="left:281px;top:60px;width:60px;height:32px;background:#c8c9ca;border-radius:3px"></div>
<svg class="a" style="left:292px;top:68px" width="17" height="17" viewBox="0 0 17 17"><rect x="0.6" y="0.6" width="15.8" height="15.8" stroke="#232627" stroke-width="1.2" fill="none"/><circle cx="5" cy="5" r="1.6" fill="#232627"/><path d="M1 14l5-5 3 3 3-4 4 4" stroke="#232627" stroke-width="1.1" fill="none"/></svg>
<span class="t" style="left:316px;top:68px;">Миниатюры</span>
<span class="t" style="left:9px;top:103px;color:#7f8081">Точки входа</span>
<div class="a" style="left:8px;top:126px;width:157px;height:21px;background:#c2e0f5"></div>
<svg class="a" style="left:12px;top:131px" width="13" height="13" viewBox="0 0 13 13"><path d="M1 6.5L6.5 1 12 6.5M2.5 5v7h8V5M5.5 12V9h2v3M9.5 1.5v2" stroke="#232627" stroke-width="1.2" fill="none"/></svg><span class="t" style="left:30px;top:128px;">Домашняя папка</span>
<svg class="a" style="left:12px;top:152px" width="13" height="13" viewBox="0 0 13 13"><rect x="0.6" y="0.6" width="11.8" height="11.8" stroke="#232627" stroke-width="1.2" fill="none"/><path d="M1 10h11" stroke="#232627"/></svg><span class="t" style="left:30px;top:149px;">Рабочий стол</span>
<svg class="a" style="left:12px;top:173px" width="13" height="13" viewBox="0 0 13 13"><path d="M0.6 0.6h8v2.5h3v9.3H3V3.1H0.6z" stroke="#232627" stroke-width="1.2" fill="none"/><path d="M3 3.1h5.6v9" stroke="#232627" stroke-width="1.2" fill="none"/></svg><span class="t" style="left:30px;top:170px;">Документы</span>
<svg class="a" style="left:12px;top:194px" width="13" height="13" viewBox="0 0 13 13"><path d="M6.5 0v8M3 5l3.5 3.5L10 5M0.6 9v3.4h11.8V9" stroke="#232627" stroke-width="1.2" fill="none"/></svg><span class="t" style="left:30px;top:191px;">Загрузки</span>
<svg class="a" style="left:12px;top:215px" width="13" height="13" viewBox="0 0 13 13"><path d="M6 0.5L1.5 12.5M6 12.5h6.5" stroke="#232627" stroke-width="1.3" fill="none"/></svg><span class="t" style="left:30px;top:212px;">Корневая папка</span>
<svg class="a" style="left:12px;top:236px" width="13" height="13" viewBox="0 0 13 13"><path d="M0.5 2.5h12M4 2.5V0.6h5v1.9M2 2.5v10h9v-10M5 5v5M8 5v5" stroke="#232627" stroke-width="1.2" fill="none"/></svg><span class="t" style="left:30px;top:233px;">Корзина</span>
<span class="t" style="left:9px;top:262px;color:#7f8081">В сети</span>
<svg class="a" style="left:12px;top:290px" width="13" height="13" viewBox="0 0 13 13"><circle cx="6.5" cy="6.5" r="5.8" stroke="#232627" stroke-width="1.2" fill="none"/><circle cx="4.3" cy="6.5" r="1.3" fill="#232627"/><circle cx="8.5" cy="4.3" r="1.3" fill="#232627"/><circle cx="8.5" cy="8.7" r="1.3" fill="#232627"/></svg><span class="t" style="left:30px;top:287px;">Сеть</span>
<span class="t" style="left:9px;top:316px;color:#7f8081">Недавно изменённые</span>
<svg class="a" style="left:12px;top:344px" width="13" height="13" viewBox="0 0 13 13"><rect x="0.6" y="1.6" width="11.8" height="11" stroke="#232627" stroke-width="1.2" fill="none"/><path d="M0.6 4.5h11.8" stroke="#232627" stroke-width="1.5"/><path d="M3 0v3M10 0v3M3 7h1.5M6 7h1.5M9 7h1.5M3 9.5h1.5M6 9.5h1.5M9 9.5h1.5" stroke="#232627" stroke-width="1.3"/></svg><span class="t" style="left:30px;top:341px;">Сегодня</span>
<svg class="a" style="left:12px;top:365px" width="13" height="13" viewBox="0 0 13 13"><rect x="0.6" y="1.6" width="11.8" height="11" stroke="#232627" stroke-width="1.2" fill="none"/><path d="M0.6 4.5h11.8" stroke="#232627" stroke-width="1.5"/><path d="M3 0v3M10 0v3M3 7h1.5M6 7h1.5M9 7h1.5M3 9.5h1.5M6 9.5h1.5M9 9.5h1.5" stroke="#232627" stroke-width="1.3"/></svg><span class="t" style="left:30px;top:362px;">Вчера</span>
<span class="t" style="left:9px;top:391px;color:#7f8081">Поиск</span>
<svg class="a" style="left:12px;top:419px" width="13" height="13" viewBox="0 0 13 13"><path d="M0 1h12M0 4h9M0 7h12M0 10h9M0 13h12" stroke="#232627" stroke-width="1.1"/></svg><span class="t" style="left:30px;top:416px;">Документы</span>
<svg class="a" style="left:12px;top:440px" width="13" height="13" viewBox="0 0 13 13"><rect x="0.6" y="0.6" width="11.8" height="11.8" stroke="#232627" stroke-width="1.2" fill="none"/><circle cx="4" cy="4" r="1.3" fill="#232627"/><path d="M1 12l4-4 2.5 2.5L9 9l3.5 3.5z" fill="#232627"/></svg><span class="t" style="left:30px;top:437px;">Изображения</span>
<svg class="a" style="left:12px;top:461px" width="13" height="13" viewBox="0 0 13 13"><path d="M4 11V1.5h8v8" stroke="#232627" stroke-width="1.3" fill="none"/><circle cx="2.3" cy="11" r="2" fill="#232627"/><circle cx="10.3" cy="9.5" r="2" fill="#232627"/></svg><span class="t" style="left:30px;top:458px;">Аудиофайлы</span>
<svg class="a" style="left:12px;top:482px" width="13" height="13" viewBox="0 0 13 13"><rect x="0.6" y="0.6" width="11.8" height="11.8" stroke="#232627" stroke-width="1.2" fill="none"/><path d="M3 1v11M10 1v11M3 6.5h7M0.6 3.5h2.4M0.6 6.5h2.4M0.6 9.5h2.4M10 3.5h2.4M10 6.5h2.4M10 9.5h2.4" stroke="#232627" stroke-width="1.2"/></svg><span class="t" style="left:30px;top:479px;">Видеофайлы</span>
<span class="t" style="left:9px;top:508px;color:#7f8081">Устройства</span>
<div class="a" style="left:173px;top:108px;width:3.5px;height:385px;background:#a5a6a8;border-radius:2px"></div>
<div class="a" style="left:12px;top:543px;width:115px;height:3px;background:#a5a6a8;border-radius:2px"></div>
<svg class="a" style="left:193px;top:105px" width="7" height="12" viewBox="0 0 7 12"><path d="M1 1l5 5-5 5" stroke="#232627" stroke-width="1.3" fill="none"/></svg>
<span class="t" style="left:208px;top:103px;font-weight:bold;letter-spacing:0.7px">Домашняя папка</span>
<div class="a" style="left:189px;top:129px;width:564px;height:396px;background:#fcfcfc;border:1px solid #bfc0c2;border-radius:3px"></div>
<div class="a" style="left:739px;top:137px;width:3px;height:251px;background:#a5a6a8;border-radius:2px"></div>
<svg width="0" height="0" style="position:absolute"><defs>
<linearGradient id="gf" x1="0" y1="0" x2="0" y2="1"><stop offset="0" stop-color="#6ec3f2"/><stop offset="1" stop-color="#3eade8"/></linearGradient>
<linearGradient id="gl" x1="0" y1="0" x2="0" y2="1"><stop offset="0" stop-color="#b3ddf4"/><stop offset="1" stop-color="#9dd2f0"/></linearGradient>
<symbol id="fold" viewBox="0 0 58 52"><path d="M1 0H24L28 4H57V44H1Z" fill="#1878b5"/><path d="M0 14H19L23 10H58V52H0Z" fill="url(#gf)"/><rect x="0" y="51" width="58" height="1" fill="#2a8ccc"/></symbol>
<symbol id="lfold" viewBox="0 0 58 52"><path d="M1 0H24L28 4H57V44H1Z" fill="#88bddb"/><path d="M0 14H19L23 10H58V52H0Z" fill="url(#gl)"/><rect x="0" y="51" width="58" height="1" fill="#92c8e6"/></symbol>
</defs></svg>
<svg class="a" style="left:236px;top:146px" width="58" height="52" viewBox="0 0 58 52"><use href="#fold"/></svg>
<span class="lbl " style="left:200px;top:206px;">Шаблоны</span>
<div class="a" style="left:230px;top:223px;width:68px;height:1px;background:#c2e0f5"></div>
<svg class="a" style="left:366px;top:146px" width="58" height="52" viewBox="0 0 58 52">
<defs><linearGradient id="tb" x1="0" y1="1" x2="1" y2="0"><stop offset="0" stop-color="#2a7fbf"/><stop offset="1" stop-color="#16b08a"/></linearGradient>
<linearGradient id="tr" x1="0" y1="0" x2="1" y2="0"><stop offset="0" stop-color="#d24a5f"/><stop offset="1" stop-color="#a84390"/></linearGradient></defs>
<rect width="58" height="52" fill="url(#tb)"/>
<path d="M58 0L18.7 30.2 58 30z" fill="#a5468c"/>
<path d="M18.2 30.4L58 16V47.4H41.2z" fill="url(#tr)"/>
<path d="M0 43.4L18.7 30.2 41.2 47.4H0z" fill="#4b5757"/>
<rect y="47.4" width="58" height="4.6" fill="#dcdedf"/>
</svg>
<span class="lbl " style="left:330px;top:206px;">Рабочий стол</span>
<svg class="a" style="left:497px;top:146px" width="58" height="52" viewBox="0 0 58 52"><use href="#fold"/></svg>
<span class="lbl " style="left:461px;top:206px;">Общедоступны</span>
<span class="lbl " style="left:461px;top:222px;">е</span>
<svg class="a" style="left:627px;top:146px" width="58" height="52" viewBox="0 0 58 52"><use href="#fold"/><path d="M23.4 37.5V22.4h14.6v12.4" stroke="#1b6398" stroke-width="2" fill="none"/><path d="M23.4 24.8h14.6" stroke="#1b6398" stroke-width="1.3"/><circle cx="21.4" cy="37.5" r="2.8" fill="#1b6398"/><circle cx="35.8" cy="34.8" r="2.8" fill="#1b6398"/></svg>
<span class="lbl " style="left:591px;top:206px;">Музыка</span>
<svg class="a" style="left:236px;top:258px" width="58" height="52" viewBox="0 0 58 52"><use href="#fold"/><rect x="19.6" y="21" width="19" height="19.5" stroke="#1b6398" stroke-width="1.3" fill="none"/><circle cx="24.5" cy="26" r="2" fill="#1b6398"/><path d="M21 39l5-5 2 2-2 3zM27 39l7-8 4 4.5V39z" fill="#1b6398"/></svg>
<span class="lbl " style="left:200px;top:318px;">Изображения</span>
<svg class="a" style="left:366px;top:258px" width="58" height="52" viewBox="0 0 58 52"><use href="#fold"/><path d="M27 21h4v7.5h3.5L29 34l-5.5-5.5H27z" stroke="#1b6398" stroke-width="1.3" fill="none" stroke-linejoin="miter"/><path d="M19 36.5v3.8h20v-3.8" stroke="#1b6398" stroke-width="1.3" fill="none"/></svg>
<span class="lbl " style="left:330px;top:318px;">Загрузки</span>
<svg class="a" style="left:497px;top:258px" width="58" height="52" viewBox="0 0 58 52"><use href="#fold"/><path d="M20.8 21h16.5v13.5l-5.8 5.8H20.8z" stroke="#1b6398" stroke-width="1.3" fill="none"/><path d="M31.5 40.3v-5.8h5.8z" fill="#1b6398"/></svg>
<span class="lbl " style="left:461px;top:318px;">Документы</span>
<svg class="a" style="left:627px;top:258px" width="58" height="52" viewBox="0 0 58 52"><use href="#fold"/><rect x="19.5" y="21" width="19" height="19.5" stroke="#1b6398" stroke-width="1.3" fill="none"/><path d="M23.5 21v19.5M34.5 21v19.5M23.5 30.7h11" stroke="#1b6398" stroke-width="1.3"/><path d="M20 24h3M20 27.5h3M20 31h3M20 34.5h3M20 38h3M35 24h3M35 27.5h3M35 31h3M35 34.5h3M35 38h3" stroke="#1b6398" stroke-width="1.4"/></svg>
<span class="lbl " style="left:591px;top:318px;">Видео</span>
<svg class="a" style="left:236px;top:353px" width="58" height="52" viewBox="0 0 58 52"><use href="#lfold"/></svg>
<span class="lbl hid" style="left:200px;top:413px;">.mozilla</span>
<svg class="a" style="left:366px;top:353px" width="58" height="52" viewBox="0 0 58 52"><use href="#lfold"/></svg>
<span class="lbl hid" style="left:330px;top:413px;">.local</span>
<svg class="a" style="left:497px;top:353px" width="58" height="52" viewBox="0 0 58 52"><use href="#lfold"/></svg>
<span class="lbl hid" style="left:461px;top:413px;">.kde</span>
<svg class="a" style="left:627px;top:353px" width="58" height="52" viewBox="0 0 58 52"><use href="#lfold"/></svg>
<span class="lbl hid" style="left:591px;top:413px;">.config</span>
<svg class="a" style="left:236px;top:447px" width="58" height="52" viewBox="0 0 58 52"><use href="#lfold"/></svg>
<span class="lbl hid" style="left:200px;top:508px;">.cache</span>
<svg class="a" style="left:373px;top:445px" width="44" height="58" viewBox="0 0 44 58">
<path d="M0 0H30L44 14V58H0z" fill="#f5f5f5"/><path d="M30 0L44 14H30z" fill="#c8c9ca"/><path d="M30 14H44V28z" fill="#ececec"/><rect y="57" width="44" height="1" fill="#e0e0e0"/><path d="M11 19.5H33" stroke="#a9aaab" stroke-width="1"/><path d="M11 22.5H33" stroke="#a9aaab" stroke-width="1"/><path d="M11 25.5H22" stroke="#a9aaab" stroke-width="1"/><path d="M11 29.5H33" stroke="#a9aaab" stroke-width="1"/><path d="M11 32.5H30" stroke="#a9aaab" stroke-width="1"/><path d="M11 34.5H22" stroke="#a9aaab" stroke-width="1"/><path d="M11 37.5H33" stroke="#a9aaab" stroke-width="1"/><path d="M11 40.5H27" stroke="#a9aaab" stroke-width="1"/></svg>
<span class="lbl hid" style="left:330px;top:508px;letter-spacing:0.2px">.xsession-errors</span>
<svg class="a" style="left:504px;top:445px" width="44" height="58" viewBox="0 0 44 58">
<defs><linearGradient id="xg" x1="0" y1="0" x2="0" y2="1"><stop offset="0" stop-color="#b9b9b9"/><stop offset="1" stop-color="#a6a6a6"/></linearGradient></defs>
<path d="M0 0H30L44 14V58H0z" fill="url(#xg)"/><path d="M30 0L44 14H30z" fill="#d6d6d6"/><path d="M30 14H44V30z" fill="#a0a0a0" opacity="0.6"/>
<rect x="9.5" y="20" width="25" height="21" stroke="#f0f0f0" stroke-width="1.3" fill="none"/><path d="M9.5 24h25" stroke="#f0f0f0" stroke-width="1.2"/>
<path d="M26.5 21.8h1.5M29 21.8h1.5M31.5 21.8h1.5" stroke="#f0f0f0" stroke-width="1.2"/>
<path d="M19.5 30c0-2 1.2-3 2.7-3s2.7 1 2.7 2.6c0 2.2-2.6 2.3-2.6 4.3" stroke="#f4f4f4" stroke-width="1.5" fill="none"/><circle cx="22.3" cy="37" r="0.9" fill="#f4f4f4"/>
</svg>
<span class="lbl hid" style="left:461px;top:508px;">.Xauthority</span>
<svg class="a" style="left:634px;top:445px" width="44" height="58" viewBox="0 0 44 58">
<path d="M0 0H30L44 14V58H0z" fill="#f5f5f5"/><path d="M30 0L44 14H30z" fill="#c8c9ca"/><path d="M30 14H44V28z" fill="#ececec"/><rect y="57" width="44" height="1" fill="#e0e0e0"/><path d="M11 19.5H33" stroke="#a9aaab" stroke-width="1"/><path d="M11 22.5H33" stroke="#a9aaab" stroke-width="1"/><path d="M11 25.5H22" stroke="#a9aaab" stroke-width="1"/><path d="M11 29.5H33" stroke="#a9aaab" stroke-width="1"/><path d="M11 32.5H30" stroke="#a9aaab" stroke-width="1"/><path d="M11 34.5H22" stroke="#a9aaab" stroke-width="1"/><path d="M11 37.5H33" stroke="#a9aaab" stroke-width="1"/><path d="M11 40.5H27" stroke="#a9aaab" stroke-width="1"/></svg>
<span class="lbl hid" style="left:591px;top:508px;letter-spacing:0.3px">.gtkrc-2.0-kde4</span>
<span class="t" style="left:190px;top:534px;letter-spacing:0.4px">13 папок. 9 файлов (8,5 КиБ)</span>
<div class="a" style="left:399px;top:539px;width:171px;height:6px;background:#b0b1b2;border-radius:3px"></div>
<div class="a" style="left:399px;top:539px;width:47px;height:6px;background:#bcdcf2;border-radius:3px 0 0 3px"></div>
<div class="a" style="left:437px;top:533px;width:18px;height:18px;background:#f5f5f5;border:1px solid #a9aaab;border-radius:50%"></div>
<div class="a" style="left:578px;top:539px;width:48px;height:6px;background:#b0b1b2;border-radius:3px"></div>
<div class="a" style="left:578px;top:539px;width:21px;height:6px;background:#bcdcf2;border-radius:3px 0 0 3px"></div>
<span class="t" style="left:630px;top:534px;letter-spacing:0.4px">свободно 9,1 ГиБ</span>
<div class="a" style="left:334px;top:28px;width:379px;height:109px;background:#f2f3f3;border:1px solid #cbcccd;border-top:none;box-shadow:0 3px 9px rgba(0,0,0,.28)"></div>
<div class="a" style="left:341px;top:33px;width:16px;height:16px;border:1px solid #3daee9;border-radius:2px;background:#fdfaf6"></div>
<div class="a" style="left:344px;top:36px;width:10px;height:10px;background:#3daee9"></div>
<span class="t" style="left:387px;top:32px;">Показать панель инструментов</span>
<div class="a" style="left:336px;top:57px;width:375px;height:1px;background:#c9cacb"></div>
<svg class="a" style="left:366px;top:67px" width="15" height="13" viewBox="0 0 15 13"><path d="M7.5 0v3" stroke="#232627"/><rect x="0.6" y="3.6" width="13.8" height="8.8" stroke="#232627" stroke-width="1.2" fill="none"/><path d="M3 6h1M5 6h1M7 6h1M9 6h1M11 6h1M3 8h1M5 8h1M7 8h1M9 8h1M11 8h1M4 10.3h7" stroke="#232627"/></svg>
<span class="t" style="left:387px;top:65px;">Комбинации клавиш...</span>
<svg class="a" style="left:366px;top:92px" width="15" height="14" viewBox="0 0 15 14"><path d="M1 3.5h13M1 10.5h13" stroke="#232627" stroke-width="1.2"/><circle cx="10" cy="3.5" r="2.2" fill="#232627"/><circle cx="5" cy="10.5" r="1.9" fill="#f2f3f3" stroke="#232627" stroke-width="1"/></svg>
<span class="t" style="left:387px;top:91px;">Панели инструментов...</span>
<svg class="a" style="left:366px;top:118px" width="15" height="14" viewBox="0 0 15 14"><path d="M1 3.5h13M1 10.5h13" stroke="#232627" stroke-width="1.2"/><circle cx="10" cy="3.5" r="2.2" fill="#232627"/><circle cx="5" cy="10.5" r="1.9" fill="#f2f3f3" stroke="#232627" stroke-width="1"/></svg>
<span class="t" style="left:387px;top:117px;">Настроить Dolphin...</span>
<span class="t" style="left:605px;top:117px;letter-spacing:1.0px">Ctrl+Shift+,</span>
<div class="a" style="left:472px;top:672px;width:422px;height:8px;background:#e9ebe8"></div>
<div class="a" style="left:527px;top:676px;width:52px;height:4px;background:#3daee9;border-radius:2px 2px 0 0"></div>
<div class="a" style="left:603px;top:677px;width:4px;height:4px;background:#3daee9;border-radius:50%"></div>
<svg class="a" style="left:479px;top:626px" width="44" height="45" viewBox="0 0 44 45">
<defs><linearGradient id="ffo" x1="0" y1="1" x2="1" y2="0"><stop offset="0" stop-color="#d8157a"/><stop offset="0.3" stop-color="#fb3a3a"/><stop offset="0.6" stop-color="#ff7a1a"/><stop offset="1" stop-color="#ffc830"/></linearGradient>
<linearGradient id="ffb" x1="0" y1="0" x2="0.3" y2="1"><stop offset="0" stop-color="#0aa0fa"/><stop offset="0.55" stop-color="#2560d8"/><stop offset="1" stop-color="#3a2aa0"/></linearGradient>
<linearGradient id="ffx" x1="0" y1="0" x2="1" y2="1"><stop offset="0" stop-color="#ff4a2a"/><stop offset="1" stop-color="#ffa020"/></linearGradient></defs>
<circle cx="22" cy="24" r="21" fill="url(#ffo)"/>
<circle cx="23" cy="20" r="13.5" fill="url(#ffb)"/>
<path d="M3 13 L5 5 L10 10 C13 9 17 9 20 11 C16 13 14 17 16 21 C18 25 23 26 28 24.5 C25 29 20 32 14 31 C7 29 3 22 3 13z" fill="url(#ffx)"/>
<path d="M26 1 C35 5 41 13 42 24 C42 33 36 40 28 43 C35 36 37 28 34 20 C32 13 28 9 24 6z" fill="#ffd535"/>
<path d="M8 28 C13 35 22 37 30 34 C25 39 15 40 9 33z" fill="#ff8a1a" opacity="0.8"/>
</svg>
<svg class="a" style="left:533px;top:631px" width="40" height="36" viewBox="0 0 40 36">
<defs><linearGradient id="dfg" x1="0" y1="0" x2="1" y2="1"><stop offset="0" stop-color="#4ea4ea"/><stop offset="1" stop-color="#2a86dc"/></linearGradient></defs>
<path d="M0 0H17L19 3H40V34H0z" fill="#2569a8"/>
<rect x="1" y="7" width="38" height="6" fill="#f2f4f6"/>
<path d="M0 15H13L15 13H40V36H0z" fill="url(#dfg)"/>
<rect y="35" width="40" height="1" fill="#1f6ab8"/>
</svg>
<svg class="a" style="left:585px;top:629px" width="40" height="40" viewBox="0 0 40 40">
<defs><linearGradient id="kg" x1="0" y1="0" x2="0" y2="1"><stop offset="0" stop-color="#3a3f44"/><stop offset="1" stop-color="#2d3134"/></linearGradient></defs>
<rect width="40" height="40" rx="1" fill="url(#kg)"/>
<path d="M15 10l10 10-10 10" stroke="#b9bcbd" stroke-width="1.6" fill="none"/>
<path d="M25 20L40 35V40H25L15 30z" fill="#000" opacity="0.12"/>
</svg>
<svg class="a" style="left:637px;top:629px" width="40" height="40" viewBox="0 0 40 40">
<rect width="40" height="40" rx="1" fill="url(#kg)"/>
<path d="M5 15H37M5 25H37" stroke="#4c5054" stroke-width="2"/>
<path d="M5 15H28M5 25H16" stroke="#3daee9" stroke-width="2"/>
<circle cx="28" cy="15" r="3" fill="#fcfcfc"/><circle cx="16" cy="25" r="3" fill="#fcfcfc"/>
</svg>
<svg class="a" style="left:688px;top:626px" width="42" height="47" viewBox="0 0 42 47">
<path d="M21 0L42 12V36L21 47 0 36V12z" fill="#e98b2b"/>
<path d="M21 0L42 12 21 24 0 12z" fill="#f2c463"/>
<path d="M8 8L30 20" stroke="#f8e0b0" stroke-width="3"/>
<path d="M6 14L21 24V47L6 38z" fill="#f0b850"/>
<path d="M21 24L36 14V38L21 47z" fill="#f0b850"/>
<path d="M6 28L21 36 36 28 36 38 21 46 6 38z" fill="#6b9ccd"/>
<path d="M30 24L36 20V28L30 32z" fill="#d4e4a8"/>
<rect x="7" y="27" width="11" height="10" fill="#f4f0d8"/><rect x="9" y="29" width="7" height="6" fill="#8a8a88"/>
<rect x="20" y="24" width="2.5" height="23" fill="#9a5a38"/>
</svg>
<svg class="a" style="left:741px;top:629px" width="40" height="40" viewBox="0 0 40 40">
<defs><linearGradient id="sg" x1="0" y1="0" x2="0" y2="1"><stop offset="0" stop-color="#4aa89a"/><stop offset="1" stop-color="#6cb878"/></linearGradient></defs>
<rect width="40" height="40" fill="#3b3f44"/>
<path d="M0 22C4 15 7 11 10 11 15 11 19 26 25 26 29 26 30 21 34 21 37 21 39 24 40 26V40H0z" fill="url(#sg)"/>
<path d="M7 9V7h2M13 7h2v2M7 13v2h2M13 15h2v-2M29 19v-2h2M35 17h2v2M29 23v2h2M35 25h2v-2" stroke="#e8f0f0" stroke-width="1" fill="none"/>
<rect y="39" width="40" height="1" fill="#4ea860"/>
</svg>
<svg class="a" style="left:793px;top:629px" width="40" height="40" viewBox="0 0 40 40">
<rect width="40" height="40" fill="#b9c3c6"/>
<g fill="#e54a3a">
<rect x="1" y="1" width="18" height="6"/><rect x="21" y="1" width="18" height="6"/>
<rect x="1" y="9" width="7" height="6"/><rect x="11" y="9" width="18" height="6"/><rect x="31" y="9" width="8" height="6"/>
<rect x="1" y="17" width="18" height="6"/><rect x="21" y="17" width="18" height="6"/>
<rect x="1" y="25" width="7" height="6"/><rect x="11" y="25" width="18" height="6"/><rect x="31" y="25" width="8" height="6"/>
<rect x="1" y="33" width="18" height="6"/><rect x="21" y="33" width="18" height="6"/>
</g>
<path d="M20 11L29 15C29 24 26 28 20 31 14 28 11 24 11 15z" fill="#fff"/>
<path d="M20 13.5L27 16.5C27 23.5 24.5 26.5 20 28.8 15.5 26.5 13 23.5 13 16.5z" fill="#4d5356"/>
</svg>
<svg class="a" style="left:843px;top:627px" width="44" height="44" viewBox="0 0 44 44">
<circle cx="22" cy="22" r="21.5" fill="#eceeef"/>
<circle cx="22" cy="22" r="21.5" fill="none" stroke="#d0d3d4" stroke-width="0.5"/>
<text x="22" y="10.5" font-family="Liberation Sans" font-size="7.5" fill="#3daee9" text-anchor="middle" letter-spacing="-0.5">12</text>
<path d="M1.5 22h4M38.5 22h4M22 38.5v4" stroke="#3daee9" stroke-width="1"/>
<path d="M22 22l-8 8" stroke="#555" stroke-width="1.3" stroke-linecap="round"/>
<path d="M22 22l8 12" stroke="#999" stroke-width="1" stroke-linecap="round"/>
<circle cx="22" cy="22" r="1.2" fill="#555"/>
</svg>
<div class="a" style="left:1335px;top:652px;width:28px;height:28px;background:rgba(235,240,225,0.45)"></div>
<svg class="a" style="left:1342px;top:660px" width="14" height="12" viewBox="0 0 14 12"><path d="M0 1.5h14M0 6h14M0 10.5h14" stroke="#5a5e5a" stroke-width="1.6"/></svg>
</body></html>
